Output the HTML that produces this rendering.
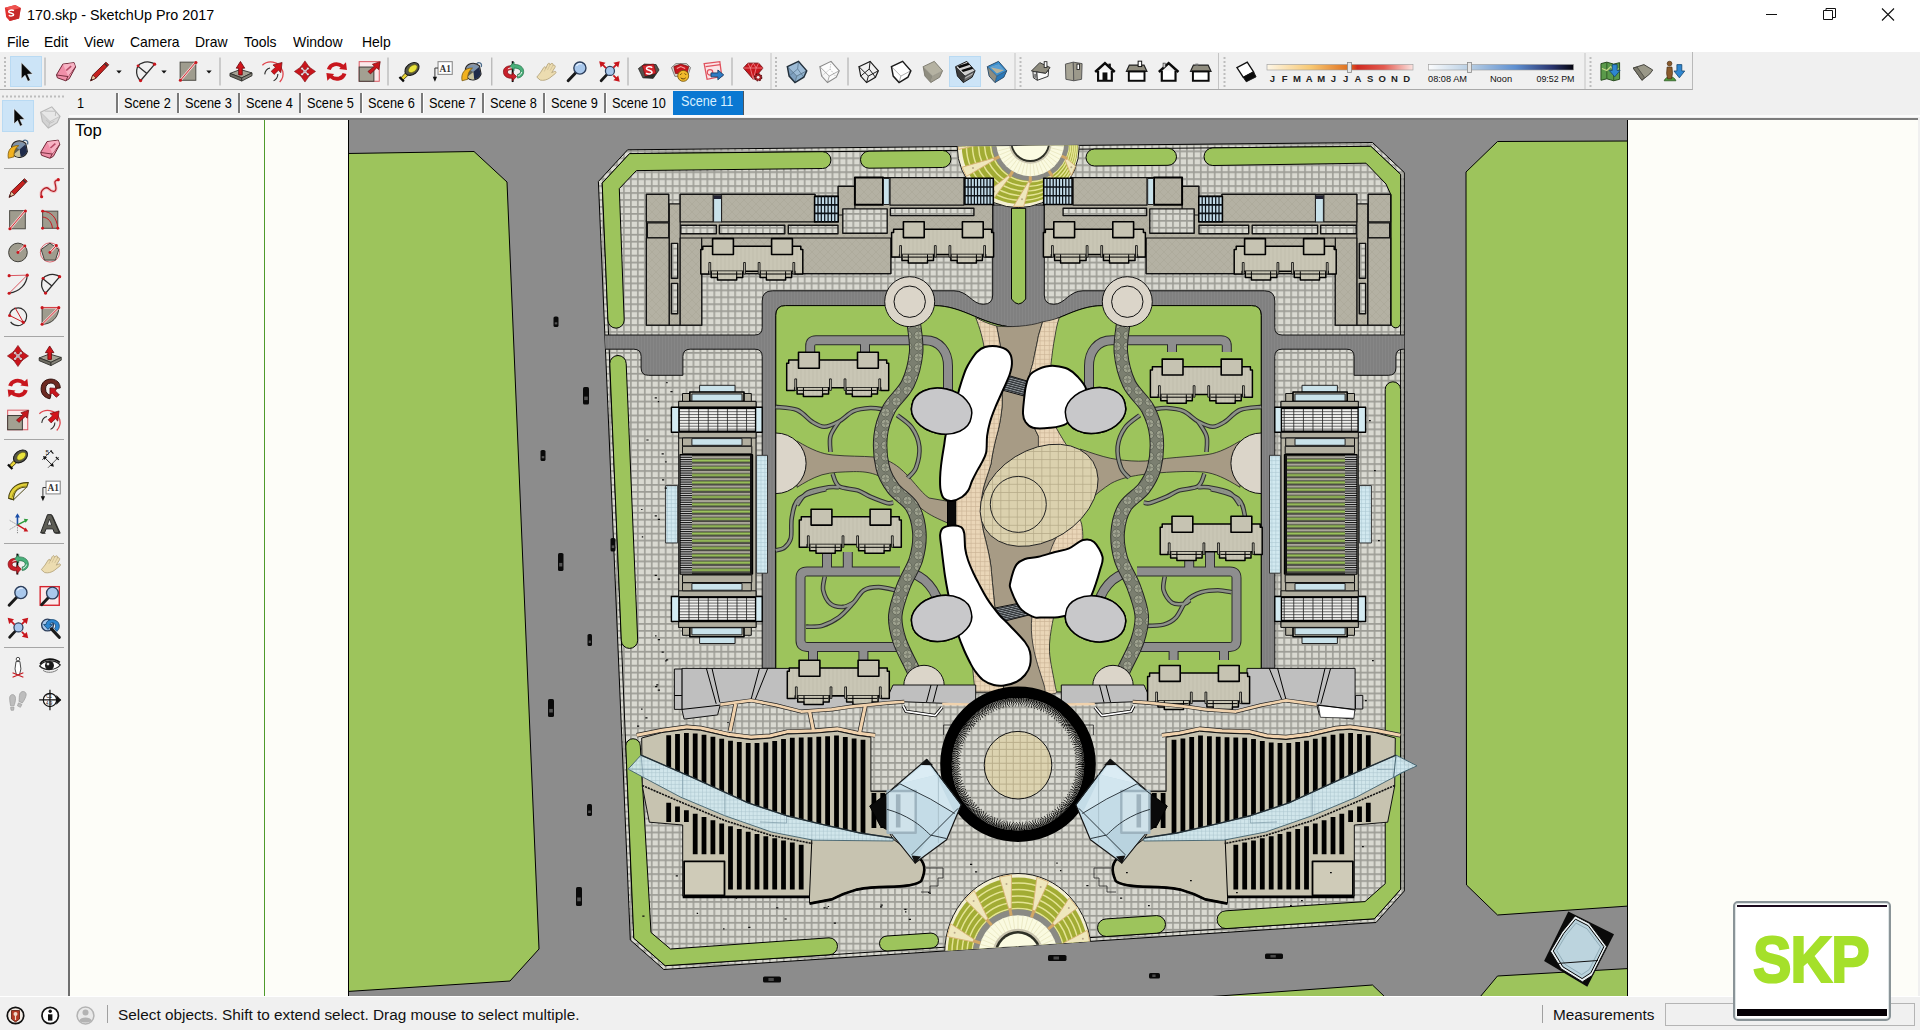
<!DOCTYPE html>
<html lang="en">
<head>
<meta charset="utf-8">
<title>170.skp - SketchUp Pro 2017</title>
<style>
*{box-sizing:border-box;margin:0;padding:0}
html,body{width:1920px;height:1030px;overflow:hidden;background:#f0f0f0;font-family:"Liberation Sans",sans-serif;color:#000}
.abs{position:absolute}
#titlebar{position:absolute;left:0;top:0;width:1920px;height:52px;background:#fff}
#title{position:absolute;left:27px;top:6px;font-size:15px;line-height:18px;white-space:nowrap;transform-origin:0 0;transform:scaleX(.955)}
.menu{position:absolute;top:32.7px;font-size:15px;line-height:18px;white-space:nowrap;transform-origin:0 0;transform:scaleX(.93)}
#toolbar{position:absolute;left:0;top:52px;width:1920px;height:38px;background:#f0f0f0}
#tbbox{position:absolute;left:0;top:0;width:1693px;height:38px;border-right:1px solid #b9b9b9;border-bottom:1px solid #a9a9a9}
#wline{position:absolute;left:69px;top:115px;width:1851px;height:2px;background:#fbfbfb}
#tabs{position:absolute;left:69px;top:91px;height:25px;width:1851px}
.tab{position:absolute;top:4px;font-size:14px;line-height:16px;white-space:nowrap;transform-origin:0 0;transform:scaleX(.91)}
.tsep{position:absolute;top:2px;width:2px;height:20px;background:#7a7a7a;border-right:1px solid #fff;box-sizing:content-box}
#seltab{position:absolute;left:604px;top:0;width:71px;height:24px;background:#0a78d2;border-right:1px solid #4a5560}
#seltab span{position:absolute;left:8px;top:2px;color:#d8f0ff;font-size:14px;line-height:16px;white-space:nowrap;transform-origin:0 0;transform:scaleX(.9)}
#lefttb{position:absolute;left:0;top:91px;width:68px;height:906px;background:#f0f0f0}
#viewport{position:absolute;left:68px;top:118px;width:1850px;height:878px;background:#fdfdf8;border-left:2px solid #6e6e6e;border-top:2px solid #7c7c7c;overflow:hidden}
#vtop{position:absolute;left:5px;top:1px;font-family:"Liberation Sans",sans-serif;font-size:17px;line-height:19px;transform-origin:0 0;transform:scaleX(.98)}
#axis{position:absolute;left:194px;top:0;width:1px;height:876px;background:#4f9a2c}
#plan{position:absolute;left:278px;top:0;width:1280px;height:876px}
#status{position:absolute;left:0;top:996px;width:1920px;height:34px;background:#f0f0f0;border-top:1px solid #fff}
#stext{position:absolute;left:118px;top:9px;font-size:15.5px;line-height:18px;white-space:nowrap;transform-origin:0 0;transform:scaleX(.99);color:#111}
#meas{position:absolute;left:1553px;top:9px;font-size:15.5px;line-height:18px;white-space:nowrap;transform-origin:0 0;transform:scaleX(.99);color:#111}
#measbox{position:absolute;left:1665px;top:6px;width:250px;height:23px;border:1px solid #b4b4b4;background:#f0f0f0}
#skp{position:absolute;left:1733px;top:901px;width:158px;height:120px;border-radius:5px;background:#fff;border:2px solid #8a9498;box-shadow:0 0 0 1px #dfe5e6 inset}
#skp .t{position:absolute;left:2px;top:2px;right:2px;height:2px;background:#1b0a1d}
#skp .b{position:absolute;left:2px;bottom:3px;right:2px;height:7px;background:#050005}
#skp span{position:absolute;left:18px;top:22px;font-weight:bold;font-size:64px;line-height:70px;color:#a5e02a;letter-spacing:-1px;transform-origin:0 0;transform:scaleX(.9);-webkit-text-stroke:2.2px #a5e02a}
</style>
</head>
<body>
<div id="titlebar">
<div id="title">170.skp - SketchUp Pro 2017</div>
<div class="menu" style="left:7px">File</div>
<div class="menu" style="left:44px">Edit</div>
<div class="menu" style="left:84px">View</div>
<div class="menu" style="left:130px">Camera</div>
<div class="menu" style="left:195px">Draw</div>
<div class="menu" style="left:244px">Tools</div>
<div class="menu" style="left:293px">Window</div>
<div class="menu" style="left:362px">Help</div>
<svg class="abs" style="left:0;top:0" width="1920" height="30" viewBox="0 0 1920 30"><g transform="translate(4 4.2) scale(.86)"><path d="M1 4L13 1L19.5 4.5L17.5 16.5L6.5 19.5L2.5 15Z" fill="#e0312f"/><path d="M1 4L13 1L19.5 4.5L8 7.5Z" fill="#ef5350"/><path d="M8 7.5L19.5 4.5L17.5 16.5L6.5 19.5Z" fill="#c62828"/><path d="M11.5 7.6C9.5 6.2 5.3 6.8 5.4 8.8C5.5 10.6 11 10 11.2 12C11.4 13.8 7.4 14.2 5.6 12.8" fill="none" stroke="#fff" stroke-width="1.7"/></g><path d="M1766 14.5H1777" stroke="#111" stroke-width="1"/><path d="M1823.5 10.5H1832.5V19.5H1823.5ZM1826 10.5V8.5H1835.5V17.5H1832.5" fill="none" stroke="#111" stroke-width="1"/><path d="M1882 8.5L1894 20.5M1894 8.5L1882 20.5" stroke="#111" stroke-width="1.1"/></svg>
</div>
<div id="toolbar"><div id="tbbox"></div>
<svg class="abs" style="left:0;top:0;font-family:'Liberation Sans',sans-serif" width="1920" height="38" viewBox="0 0 1920 38"><rect x="4.0" y="5.0" width="2" height="2" fill="#bdbdbd"/><rect x="4.0" y="9.0" width="2" height="2" fill="#bdbdbd"/><rect x="4.0" y="13.0" width="2" height="2" fill="#bdbdbd"/><rect x="4.0" y="17.0" width="2" height="2" fill="#bdbdbd"/><rect x="4.0" y="21.0" width="2" height="2" fill="#bdbdbd"/><rect x="4.0" y="25.0" width="2" height="2" fill="#bdbdbd"/><rect x="4.0" y="29.0" width="2" height="2" fill="#bdbdbd"/><rect x="4.0" y="33.0" width="2" height="2" fill="#bdbdbd"/><rect x="10.5" y="4.5" width="31" height="30" fill="#cce4f7" stroke="#b9daf3" stroke-width="1"/><g transform="translate(12.9 6.9) scale(1.05)"><path d="M8 3.5L8 19L11.6 15.6L14.2 21.4L16.6 20.3L14 14.6L18.8 14.4Z" fill="#0a0a0a" stroke="#fff" stroke-width=".5"/></g><rect x="44.5" y="5.5" width="1" height="28.0" fill="#a6a6a6"/><g transform="translate(54.0 7.7) scale(0.98)"><path d="M2.5 15.5L9 4.5L20.5 3L22 7.5L15.5 19.5L12 21.5L3.5 18.5Z" fill="#f08fa8" stroke="#6b2433" stroke-width="1"/><path d="M2.8 15.6L14.2 17.2L21.8 7.4M14.2 17.2L12.2 21.2" fill="none" stroke="#6b2433" stroke-width=".9"/><path d="M9.2 5L14.6 16.8L21.5 7L20.3 3.3Z" fill="#f7b3c4"/><path d="M12.5 11L17.5 6.5" stroke="#b54a66" stroke-width="1.6"/></g><g transform="translate(87.7 7.7) scale(0.98)"><path d="M3 21.5L5.2 15.6L18.6 2.6L21.4 5.2L8.6 18.8Z" fill="#c7211f" stroke="#5a0d0d" stroke-width=".9"/><path d="M3 21.5L5.2 15.6L8.6 18.8Z" fill="#e8c9a0" stroke="#5a0d0d" stroke-width=".7"/><path d="M3 21.5L3.9 19.2L5.2 20.4Z" fill="#111"/><path d="M17.2 4L20 6.6" stroke="#333" stroke-width="1.4"/></g><g transform="translate(133.2 7.7) scale(0.98)"><path d="M7.5 21.5C1 15 3 5 9 3.5C14 1.2 19.5 2.5 22 4.5L7.5 21.5M4.5 6.5L14 14" fill="none" stroke="#2b2b2b" stroke-width="1.3"/><circle cx="7.5" cy="21.3" r="1.7" fill="#c8161d"/><circle cx="21.8" cy="4.6" r="1.7" fill="#c8161d"/><circle cx="5" cy="6.3" r="1.5" fill="#c8161d"/></g><g transform="translate(176.7 7.7) scale(0.98)"><rect x="3.5" y="2.5" width="16" height="18.5" fill="#9f9c8e" stroke="#4b4a44" stroke-width="1"/><path d="M3.8 21L19.4 2.6" stroke="#f5d5d5" stroke-width="2.6"/><path d="M3.8 21L19.4 2.6" stroke="#c8161d" stroke-width=".9"/><circle cx="3.8" cy="21" r="1.6" fill="#c8161d"/><circle cx="19.6" cy="2.8" r="1.6" fill="#c8161d"/></g><g transform="translate(229.0 7.7) scale(0.98)"><path d="M1 14L11.5 10L23.5 13.5L13 18.5Z" fill="#a6a395" stroke="#2d2d2a" stroke-width=".9"/><path d="M1 14L13 18.5L13 21.8L1 16.8Z" fill="#6e6c62" stroke="#2d2d2a" stroke-width=".9"/><path d="M13 18.5L23.5 13.5L23.5 16.3L13 21.8Z" fill="#85837a" stroke="#2d2d2a" stroke-width=".9"/><path d="M9.9 15.5V8.6H7.4L11.7 1.8L16 8.6H13.5V15.5Z" fill="#d3141b" stroke="#6d0b10" stroke-width=".9"/></g><g transform="translate(261.2 7.7) scale(0.98)"><path d="M1.2 5.6C6 0.8 18 -0.2 22 11.8C23 16 21.5 20 18.9 22.8" fill="none" stroke="#e0444c" stroke-width="1.3"/><path d="M3.6 15C4 11.5 6 9 9 8.4M12.6 21.6C15.4 20 17 17.5 17 14.5" fill="none" stroke="#2a2a2a" stroke-width="1.1"/><path d="M21.3 2.8L12 5.4L14.6 7.8L10.2 11.8L13.2 15L17.6 10.8L20 13.2Z" fill="#d3141b" stroke="#6d0b10" stroke-width=".7"/></g><g transform="translate(293.2 7.7) scale(0.98)"><g fill="#c9151c" stroke="#7d0d12" stroke-width=".6"><path d="M12 1.2L16.6 7.8H13.7V10.3H10.3V7.8H7.4Z"/><path d="M12 22.8L16.6 16.2H13.7V13.7H10.3V16.2H7.4Z"/><path d="M1.2 12L7.8 7.4V10.3H10.3V13.7H7.8V16.6Z"/><path d="M22.8 12L16.2 7.4V10.3H13.7V13.7H16.2V16.6Z"/></g><path d="M8.6 8.6L15.4 15.4M15.4 8.6L8.6 15.4" stroke="#f3f3f3" stroke-width="1.3"/><path d="M9.2 9.2L14.8 14.8M14.8 9.2L9.2 14.8" stroke="#8a5a7a" stroke-width=".5"/></g><g transform="translate(324.9 7.7) scale(0.98)"><g fill="none" stroke="#c8161d" stroke-width="4"><path d="M4 10C5.5 4.5 13 2.5 18 7"/><path d="M20 14C18.5 19.5 11 21.5 6 17"/></g><path d="M14.5 9.5L22.5 10.5L21.5 2.5Z" fill="#c8161d"/><path d="M9.5 14.5L1.5 13.5L2.5 21.5Z" fill="#c8161d"/></g><g transform="translate(357.7 7.7) scale(0.98)"><rect x="1.5" y="2" width="20.5" height="20" fill="#fbe9ea" stroke="#d9545e" stroke-width="1"/><rect x="1.5" y="7.5" width="15" height="14.5" fill="#a3a092" stroke="#3a3934" stroke-width="1"/><path d="M10.5 12L17 6.8L15 4.6L23 2L21.5 10.2L19.4 8.4L13 14.5Z" fill="#c8161d" stroke="#6d0b10" stroke-width=".7"/></g><g transform="translate(397.7 7.7) scale(0.98)"><path d="M8.2 13.2L3 18.8L5.2 21L10.8 15.6Z" fill="#e8d437" stroke="#3a3608" stroke-width=".9"/><path d="M1.8 17.6L6.3 22.3" stroke="#0a0a0a" stroke-width="2.4"/><ellipse cx="14.6" cy="9.4" rx="8" ry="5.6" transform="rotate(-38 14.6 9.4)" fill="#55564a" stroke="#1a1a1a" stroke-width="1.1"/><ellipse cx="15.4" cy="9.2" rx="5.2" ry="3.2" transform="rotate(-38 15.4 9.2)" fill="#e9e33c" stroke="#6b6414" stroke-width=".7"/></g><g transform="translate(430.2 7.7) scale(0.98)"><rect x="8" y="2" width="14.5" height="13" fill="#fff" stroke="#8a8a8a" stroke-width="1.1"/><text x="15.3" y="12.2" font-family="Liberation Serif,serif" font-weight="bold" font-size="9.5" text-anchor="middle" fill="#333">A1</text><path d="M8 8.5H4.8V19" fill="none" stroke="#333" stroke-width="1"/><path d="M2.6 17.5H7L4.8 22.5Z" fill="#111"/></g><g transform="translate(459.9 7.7) scale(0.98)"><path d="M17 4.2C19.5 1.6 23 3.6 21.8 7.4" fill="none" stroke="#4a6a8a" stroke-width="1.2"/><path d="M5.5 9.5C7 3.5 15 1.6 20 6.4L21.6 14.6C19.4 21 11.4 22.6 7.4 18Z" fill="#8f9298" stroke="#232323" stroke-width="1.1"/><path d="M6.6 8.8C9.5 4.6 16 4.2 19.6 7.4L13.6 12.6Z" fill="#7c93ad"/><path d="M13.6 12.6L19.6 7.4L21.2 14.6C20 17.6 17.6 19.4 14.6 20Z" fill="#1f2b4a"/><path d="M13.6 12.6L14.6 20C11.6 20.6 9 19.4 7.6 17.4Z" fill="#c9c39c"/><path d="M13.6 12.6L7.6 17.4C6.4 15 6 12 6.6 8.8Z" fill="#5f6156"/><path d="M2.2 21.5C0.8 14 4.8 8 12.8 8.6C9.2 11 7.6 15 8 20Z" fill="#f2b21f" stroke="#7a5a10" stroke-width=".8"/></g><g transform="translate(501.5 7.7) scale(0.98)"><path d="M11.4 1.5V22.8" stroke="#0a0a0a" stroke-width="1.9"/><path d="M10.4 6.2C4.5 6 1.6 9 2 13C2.4 17.2 6.5 19.2 11 19V21.8L15.4 17.2L11 13V15.4C8 15.4 6.2 14.4 6 12.6C5.9 10.9 8 10 10.4 10Z" fill="#c8202a" stroke="#7d0d12" stroke-width=".7"/><path d="M12.8 4.8C19 4.6 22.6 8 22.6 12C22.6 16 20 18.2 16.4 18.8V15C18.6 14.6 19.4 13.4 19.4 12C19.4 10 17 8.6 12.8 8.6V11L8.6 6.8L12.8 2.4Z" fill="#49b07a" stroke="#1d6a40" stroke-width=".7"/><path d="M6.5 9.5C8 8.5 9.5 8.3 10.4 8.3M17 16.5C18.8 15.8 20.4 14.2 20.6 12.6" stroke="#f4f4f4" stroke-width="1" fill="none"/></g><g transform="translate(533.7 7.7) scale(0.98)"><path d="M3.2 17.8C6 15 8 11.5 10.2 8C11.2 6.6 12.8 7.4 12.2 9L14.4 4.4C15.2 2.8 17.2 3.6 16.6 5.4L17.6 4.2C18.8 3 20.4 4.2 19.6 5.8L20.4 5.6C21.8 5.4 22.4 6.8 21.6 8L18.4 13.2L21.2 12C22.6 11.4 23.4 13 22.2 14L16.4 18.6C13.6 20.6 10 21.6 6.6 20.8Z" fill="#ecdcb0" stroke="#b6a57c" stroke-width=".9"/><path d="M12.2 9L10.8 12M16.6 5.4L14 10.6M19.6 5.8L16.8 11" stroke="#c9b98f" stroke-width=".7" fill="none"/></g><g transform="translate(565.2 7.7) scale(0.98)"><path d="M3 21.5L11.5 12.5" stroke="#1a1a1a" stroke-width="3" stroke-linecap="round"/><circle cx="15" cy="8.5" r="6.2" fill="#a9c8ec" stroke="#2d3f5c" stroke-width="1.4"/><path d="M11.5 6.5C12.5 4.5 15 3.5 17 4.3" stroke="#e4f0ff" stroke-width="1.3" fill="none"/></g><g transform="translate(597.7 7.7) scale(0.98)"><path d="M3.5 21.5L10 14.5" stroke="#1a1a1a" stroke-width="2.8" stroke-linecap="round"/><circle cx="12.5" cy="11.5" r="4.6" fill="#a9c8ec" stroke="#2d3f5c" stroke-width="1.3"/><g fill="#c8161d"><path d="M1.5 1.5L8 3L3 8Z"/><path d="M22.5 1.5L21 8L16 3Z"/><path d="M22.5 22.5L16 21L21 16Z"/></g><path d="M4 4L8.5 8.5M20 4L16 8M20 20L16 16" stroke="#c8161d" stroke-width="1.8"/></g><g transform="translate(636.5 7.7) scale(0.98)"><path d="M2 9L8 4.5L20 5L23 10.5L17 19L6.5 18.5Z" fill="#55534d" stroke="#222" stroke-width=".8"/><path d="M6 6L17.5 4.5L20 14L9 17Z" fill="#d6262d" stroke="#7d0d12" stroke-width=".8"/><path d="M16 8.3C14.5 6.6 10.3 7 10.2 9C10.1 11 15.6 10.6 15.8 12.7C16 14.8 11.6 15.3 9.8 13.6" fill="none" stroke="#fff" stroke-width="1.6"/><path d="M6.5 18.5L9 17L20 14L17 19Z" fill="#2b2a27"/></g><g transform="translate(669.0 7.7) scale(0.98)"><path d="M2.5 8L7 4H18L22 8L19 17H6Z" fill="#d8d4cc" stroke="#666" stroke-width=".8"/><path d="M5 7L12 4.5L20 7L18.5 14L6.5 14Z" fill="#c8161d" stroke="#7d0d12" stroke-width=".8"/><path d="M8 9L12 7L16.5 9" stroke="#f2a0a0" stroke-width="1.2" fill="none"/><circle cx="14.5" cy="16.5" r="5.6" fill="#f1b92a" stroke="#7a5a10" stroke-width=".9"/><path d="M11.5 15.5L13 14M16 14L17.5 15.5M12 18.5C13.5 20 15.5 20 17 18.5" stroke="#5a3d08" stroke-width="1" fill="none"/></g><g transform="translate(701.2 7.7) scale(0.98)"><path d="M3 4L19 2L21 17L6 20Z" fill="#fbe4e6" stroke="#e0525e" stroke-width="1.3"/><path d="M4.5 7L19.5 5" stroke="#e0525e" stroke-width="1.4"/><circle cx="9" cy="13" r="2.8" fill="none" stroke="#e0525e" stroke-width="1.2"/><path d="M10 13.5H17V10.5L23 15.5L17 20.5V17.5H10Z" fill="#2e7cc4" stroke="#173e66" stroke-width=".9"/></g><g transform="translate(741.5 7.7) scale(0.98)"><path d="M2 8.5L6.5 3.5H17.5L22 8.5L12 20Z" fill="#c8161d" stroke="#6d0b10" stroke-width=".9"/><path d="M2 8.5H22M6.5 3.5L9 8.5L12 20L15 8.5L17.5 3.5M9 8.5L12 3.5L15 8.5" fill="none" stroke="#f28a8f" stroke-width=".8"/><circle cx="17" cy="18" r="3.6" fill="#a8242a" stroke="#5a0d10" stroke-width="1.4" stroke-dasharray="1.6 1.2"/><circle cx="17" cy="18" r="1.4" fill="#f0f0f0"/></g><g transform="translate(784.9 7.7) scale(0.98)"><path d="M2.5 7.1L13.9 1.7L22.3 11.3L12.1 16.7Z" fill="#9dbbd6"/><path d="M2.5 7.1L12.1 16.7L10.3 23.3L4.3 16.7Z" fill="#7fa0bf"/><path d="M12.1 16.7L22.3 11.3L19.3 17.9L10.3 23.3Z" fill="#8eb0cc"/><path d="M13.9 1.7L13 9.5L4.3 16.7M13 9.5L19.3 17.9" fill="none" stroke="#5c7a94" stroke-width=".8"/><path d="M2.5 7.1L12.1 16.7L22.3 11.3M12.1 16.7L10.3 23.3" fill="none" stroke="#4e6a82" stroke-width="0.8"/><path d="M2.5 7.1L13.9 1.7L22.3 11.3L19.3 17.9L10.3 23.3L4.3 16.7Z" fill="none" stroke="#23303c" stroke-width="1.5"/></g><g transform="translate(817.4 7.7) scale(0.98)"><path d="M2.5 7.1L13.9 1.7L22.3 11.3L12.1 16.7Z" fill="#fdfdfd"/><path d="M2.5 7.1L12.1 16.7L10.3 23.3L4.3 16.7Z" fill="#f6f6f6"/><path d="M12.1 16.7L22.3 11.3L19.3 17.9L10.3 23.3Z" fill="#fafafa"/><path d="M13.9 1.7L13 9.5L4.3 16.7M13 9.5L19.3 17.9" fill="none" stroke="#b5b5b5" stroke-width=".8" stroke-dasharray="1.5 1"/><path d="M2.5 7.1L12.1 16.7L22.3 11.3M12.1 16.7L10.3 23.3" fill="none" stroke="#8a8a8a" stroke-width="0.7"/><path d="M2.5 7.1L13.9 1.7L22.3 11.3L19.3 17.9L10.3 23.3L4.3 16.7Z" fill="none" stroke="#8a8a8a" stroke-width="1.1"/></g><g transform="translate(856.5 7.7) scale(0.98)"><path d="M2.5 7.1L13.9 1.7L22.3 11.3L12.1 16.7Z" fill="none"/><path d="M2.5 7.1L12.1 16.7L10.3 23.3L4.3 16.7Z" fill="none"/><path d="M12.1 16.7L22.3 11.3L19.3 17.9L10.3 23.3Z" fill="none"/><path d="M13.9 1.7L13 9.5L4.3 16.7M13 9.5L19.3 17.9" fill="none" stroke="#1a1a1a" stroke-width="1"/><path d="M2.5 7.1L12.1 16.7L22.3 11.3M12.1 16.7L10.3 23.3" fill="none" stroke="#1a1a1a" stroke-width="1"/><path d="M2.5 7.1L13.9 1.7L22.3 11.3L19.3 17.9L10.3 23.3L4.3 16.7Z" fill="none" stroke="#1a1a1a" stroke-width="1.2"/></g><g transform="translate(889.0 7.7) scale(0.98)"><path d="M2.5 7.1L13.9 1.7L22.3 11.3L12.1 16.7Z" fill="#fff"/><path d="M2.5 7.1L12.1 16.7L10.3 23.3L4.3 16.7Z" fill="#fff"/><path d="M12.1 16.7L22.3 11.3L19.3 17.9L10.3 23.3Z" fill="#fff"/><path d="M2.5 7.1L12.1 16.7L22.3 11.3M12.1 16.7L10.3 23.3" fill="none" stroke="#9a9a9a" stroke-width="0.8"/><path d="M2.5 7.1L13.9 1.7L22.3 11.3L19.3 17.9L10.3 23.3L4.3 16.7Z" fill="none" stroke="#1a1a1a" stroke-width="1.5"/></g><g transform="translate(920.7 7.7) scale(0.98)"><path d="M2.5 7.1L13.9 1.7L22.3 11.3L12.1 16.7Z" fill="#b5b2a2"/><path d="M2.5 7.1L12.1 16.7L10.3 23.3L4.3 16.7Z" fill="#8f8d80"/><path d="M12.1 16.7L22.3 11.3L19.3 17.9L10.3 23.3Z" fill="#a19e90"/><path d="M2.5 7.1L12.1 16.7L22.3 11.3M12.1 16.7L10.3 23.3" fill="none" stroke="#8a887c" stroke-width="0.5"/><path d="M2.5 7.1L13.9 1.7L22.3 11.3L19.3 17.9L10.3 23.3L4.3 16.7Z" fill="none" stroke="#77756a" stroke-width="0.9"/></g><path d="M116.3 18.6h5.4l-2.7 3z" fill="#111"/><path d="M161.3 18.6h5.4l-2.7 3z" fill="#111"/><path d="M206.3 18.6h5.4l-2.7 3z" fill="#111"/><rect x="219.5" y="5.5" width="1" height="28.0" fill="#a6a6a6"/><rect x="387.5" y="5.5" width="1" height="28.0" fill="#a6a6a6"/><rect x="491.3" y="5.5" width="1" height="28.0" fill="#a6a6a6"/><rect x="627.5" y="5.5" width="1" height="28.0" fill="#a6a6a6"/><rect x="731.5" y="5.5" width="1" height="28.0" fill="#a6a6a6"/><rect x="847.5" y="5.5" width="1" height="28.0" fill="#a6a6a6"/><rect x="770.5" y="1.0" width="1" height="36.0" fill="#c4c4c4"/><rect x="775.0" y="5.0" width="2" height="2" fill="#bdbdbd"/><rect x="775.0" y="9.0" width="2" height="2" fill="#bdbdbd"/><rect x="775.0" y="13.0" width="2" height="2" fill="#bdbdbd"/><rect x="775.0" y="17.0" width="2" height="2" fill="#bdbdbd"/><rect x="775.0" y="21.0" width="2" height="2" fill="#bdbdbd"/><rect x="775.0" y="25.0" width="2" height="2" fill="#bdbdbd"/><rect x="775.0" y="29.0" width="2" height="2" fill="#bdbdbd"/><rect x="775.0" y="33.0" width="2" height="2" fill="#bdbdbd"/><rect x="949.5" y="4.5" width="31" height="30" fill="#cce4f7" stroke="#b9daf3" stroke-width="1"/><g transform="translate(953.2 7.7) scale(0.98)"><path d="M2.5 7.1L13.9 1.7L22.3 11.3L12.1 16.7Z" fill="#cfcfcf"/><path d="M2.5 7.1L12.1 16.7L10.3 23.3L4.3 16.7Z" fill="#3a3a3a"/><path d="M12.1 16.7L22.3 11.3L19.3 17.9L10.3 23.3Z" fill="#6a6a6a"/><path d="M4.6 6.4L15.2 3.2L17 5.2L6.4 8.8ZM8.2 10.6L18.8 7.2L20.6 9.3L10 12.6Z" fill="#0a0a0a"/><path d="M11 18.6L20.4 13.6L19.8 15L10.8 20Z" fill="#bdbdbd"/><path d="M2.5 7.1L12.1 16.7L22.3 11.3M12.1 16.7L10.3 23.3" fill="none" stroke="#1a1a1a" stroke-width="0.7"/><path d="M2.5 7.1L13.9 1.7L22.3 11.3L19.3 17.9L10.3 23.3L4.3 16.7Z" fill="none" stroke="#1a1a1a" stroke-width="1"/></g><g transform="translate(984.9 7.7) scale(0.98)"><path d="M2.5 7.1L13.9 1.7L22.3 11.3L12.1 16.7Z" fill="#3a8fd0"/><path d="M2.5 7.1L12.1 16.7L10.3 23.3L4.3 16.7Z" fill="#8f8d80"/><path d="M12.1 16.7L22.3 11.3L19.3 17.9L10.3 23.3Z" fill="#2a78b8"/><path d="M5.5 7.6L14 5L19.5 10.8L12.2 14.2Z" fill="#b9b39a"/><path d="M5.5 7.6L19.5 10.8L14 5Z" fill="#5aa0d6"/><path d="M2.5 7.1L12.1 16.7L22.3 11.3M12.1 16.7L10.3 23.3" fill="none" stroke="#2b4d6a" stroke-width="0.7"/><path d="M2.5 7.1L13.9 1.7L22.3 11.3L19.3 17.9L10.3 23.3L4.3 16.7Z" fill="none" stroke="#2b4d6a" stroke-width="1"/></g><rect x="1014.5" y="1.0" width="1" height="36.0" fill="#c4c4c4"/><rect x="1019.5" y="5.0" width="2" height="2" fill="#bdbdbd"/><rect x="1019.5" y="9.0" width="2" height="2" fill="#bdbdbd"/><rect x="1019.5" y="13.0" width="2" height="2" fill="#bdbdbd"/><rect x="1019.5" y="17.0" width="2" height="2" fill="#bdbdbd"/><rect x="1019.5" y="21.0" width="2" height="2" fill="#bdbdbd"/><rect x="1019.5" y="25.0" width="2" height="2" fill="#bdbdbd"/><rect x="1019.5" y="29.0" width="2" height="2" fill="#bdbdbd"/><rect x="1019.5" y="33.0" width="2" height="2" fill="#bdbdbd"/><g transform="translate(1029.0 7.7) scale(0.98)"><path d="M2.5 11.5L11 3L21.5 8L17 14L8 12.5Z" fill="#8f8c7e" stroke="#333" stroke-width="1"/><path d="M4 12L8 12.5L8.5 21L4.5 18.5Z" fill="#e8e8e8" stroke="#333" stroke-width="1"/><path d="M8 12.5L17 14L20 10.5L19.5 17L8.5 21Z" fill="#fafafa" stroke="#333" stroke-width="1"/><rect x="15.5" y="2" width="2.8" height="6" fill="#fff" stroke="#222" stroke-width=".9"/><rect x="5.3" y="14.5" width="1.8" height="4" fill="#777"/></g><g transform="translate(1061.5 7.7) scale(0.98)"><path d="M4 4.5L12 2.5L12.5 21.5L4.5 20Z" fill="#a8a596" stroke="#555" stroke-width="1"/><path d="M12 2.5L21 4L20.5 20L12.5 21.5Z" fill="#9c998b" stroke="#555" stroke-width="1"/><rect x="15.8" y="4.5" width="2.6" height="5.5" fill="#fff" stroke="#222" stroke-width=".9"/></g><g transform="translate(1093.2 7.7) scale(0.98)"><path d="M2 12.5L12 3.5L22 12.5" fill="none" stroke="#0a0a0a" stroke-width="2.6"/><path d="M5 11V21.5H19V11" fill="#fff" stroke="#0a0a0a" stroke-width="2.2"/><rect x="9.5" y="13" width="5" height="8.5" fill="#111"/><rect x="15.5" y="4" width="2.5" height="4" fill="#111"/></g><g transform="translate(1124.9 7.7) scale(0.98)"><path d="M1.5 12L4.5 5.5H19.5L22.5 12Z" fill="#8f8c7e" stroke="#222" stroke-width="1.2"/><rect x="4" y="12" width="16" height="9.5" fill="#fff" stroke="#0a0a0a" stroke-width="2"/><rect x="13.5" y="1.5" width="3.6" height="5.5" fill="#fff" stroke="#111" stroke-width="1"/></g><g transform="translate(1156.9 7.7) scale(0.98)"><path d="M2 12.5L12 3.5L22 12.5" fill="none" stroke="#0a0a0a" stroke-width="2.6"/><path d="M5 11V21.5H19V11" fill="#fff" stroke="#0a0a0a" stroke-width="2.2"/><rect x="6.3" y="3.5" width="2.2" height="4.5" fill="#ddd" stroke="#333" stroke-width=".7"/></g><g transform="translate(1189.0 7.7) scale(0.98)"><path d="M1.5 12L4.5 5.5H19.5L22.5 12Z" fill="#8f8c7e" stroke="#222" stroke-width="1.2"/><rect x="4" y="12" width="16" height="9.5" fill="#fff" stroke="#0a0a0a" stroke-width="2"/><rect x="6.5" y="4" width="3" height="2" fill="#777"/></g><rect x="1218.0" y="1.0" width="1" height="36.0" fill="#c4c4c4"/><rect x="1223.5" y="5.0" width="2" height="2" fill="#bdbdbd"/><rect x="1223.5" y="9.0" width="2" height="2" fill="#bdbdbd"/><rect x="1223.5" y="13.0" width="2" height="2" fill="#bdbdbd"/><rect x="1223.5" y="17.0" width="2" height="2" fill="#bdbdbd"/><rect x="1223.5" y="21.0" width="2" height="2" fill="#bdbdbd"/><rect x="1223.5" y="25.0" width="2" height="2" fill="#bdbdbd"/><rect x="1223.5" y="29.0" width="2" height="2" fill="#bdbdbd"/><rect x="1223.5" y="33.0" width="2" height="2" fill="#bdbdbd"/><g transform="translate(1234.0 7.7) scale(0.98)"><path d="M3 8L13.5 2.5L20 12.5L9.5 18Z" fill="#fff" stroke="#111" stroke-width="1.4"/><path d="M9.5 18L20 12.5L22.5 17.5L12.5 22.5Z" fill="#0a0a0a" stroke="#111" stroke-width="1"/></g><defs><linearGradient id="mg" x1="0" x2="1"><stop offset="0" stop-color="#fdf6e6"/><stop offset=".3" stop-color="#f7c873"/><stop offset=".56" stop-color="#e0701e"/><stop offset=".62" stop-color="#d02a20"/><stop offset=".8" stop-color="#e35a50"/><stop offset="1" stop-color="#fbe3e0"/></linearGradient><linearGradient id="tg" x1="0" x2="1"><stop offset="0" stop-color="#fbfcfd"/><stop offset=".28" stop-color="#b9cfe4"/><stop offset=".6" stop-color="#5e8fd0"/><stop offset=".85" stop-color="#2a3570"/><stop offset="1" stop-color="#05050f"/></linearGradient></defs><rect x="1267" y="12.5" width="146" height="5.5" fill="url(#mg)" stroke="#9a9a9a" stroke-width=".6"/><rect x="1347.5" y="10.5" width="4" height="10" fill="#e6e6e6" stroke="#8a8a8a" stroke-width=".8"/><rect x="1428.5" y="12.5" width="145" height="5.5" fill="url(#tg)" stroke="#9a9a9a" stroke-width=".6"/><rect x="1467.5" y="10.5" width="4" height="10" fill="#e6e6e6" stroke="#8a8a8a" stroke-width=".8"/><text x="1272.5" y="30" font-size="9.5" font-weight="bold" text-anchor="middle" fill="#222">J</text><text x="1284.7" y="30" font-size="9.5" font-weight="bold" text-anchor="middle" fill="#222">F</text><text x="1296.9" y="30" font-size="9.5" font-weight="bold" text-anchor="middle" fill="#222">M</text><text x="1309.1" y="30" font-size="9.5" font-weight="bold" text-anchor="middle" fill="#222">A</text><text x="1321.3" y="30" font-size="9.5" font-weight="bold" text-anchor="middle" fill="#222">M</text><text x="1333.5" y="30" font-size="9.5" font-weight="bold" text-anchor="middle" fill="#222">J</text><text x="1345.7" y="30" font-size="9.5" font-weight="bold" text-anchor="middle" fill="#222">J</text><text x="1357.9" y="30" font-size="9.5" font-weight="bold" text-anchor="middle" fill="#222">A</text><text x="1370.1" y="30" font-size="9.5" font-weight="bold" text-anchor="middle" fill="#222">S</text><text x="1382.3" y="30" font-size="9.5" font-weight="bold" text-anchor="middle" fill="#222">O</text><text x="1394.5" y="30" font-size="9.5" font-weight="bold" text-anchor="middle" fill="#222">N</text><text x="1406.7" y="30" font-size="9.5" font-weight="bold" text-anchor="middle" fill="#222">D</text><text x="1447.5" y="30" font-size="9.3" text-anchor="middle" fill="#111" textLength="39" lengthAdjust="spacingAndGlyphs">08:08 AM</text><text x="1501" y="30" font-size="9.3" text-anchor="middle" fill="#111">Noon</text><text x="1555.5" y="30" font-size="9.3" text-anchor="middle" fill="#111" textLength="38" lengthAdjust="spacingAndGlyphs">09:52 PM</text><rect x="1584.5" y="1.0" width="1" height="36.0" fill="#c4c4c4"/><rect x="1589.5" y="5.0" width="2" height="2" fill="#bdbdbd"/><rect x="1589.5" y="9.0" width="2" height="2" fill="#bdbdbd"/><rect x="1589.5" y="13.0" width="2" height="2" fill="#bdbdbd"/><rect x="1589.5" y="17.0" width="2" height="2" fill="#bdbdbd"/><rect x="1589.5" y="21.0" width="2" height="2" fill="#bdbdbd"/><rect x="1589.5" y="25.0" width="2" height="2" fill="#bdbdbd"/><rect x="1589.5" y="29.0" width="2" height="2" fill="#bdbdbd"/><rect x="1589.5" y="33.0" width="2" height="2" fill="#bdbdbd"/><g transform="translate(1599.0 7.7) scale(0.98)"><path d="M2 4L8 2.5L15 4.5L21 3V20L15 21.5L8 19.5L2 21Z" fill="#5a9a4a" stroke="#274a1f" stroke-width="1"/><path d="M8 2.5V19.5M15 4.5V21.5" stroke="#274a1f" stroke-width=".8"/><path d="M3 9L8 11L12 7L16 12L20 9" stroke="#c9d98a" stroke-width="1.2" fill="none"/><path d="M13.5 5H18.5V11H21.5L16 17.5L10.5 11H13.5Z" fill="#2e86d0" stroke="#15456e" stroke-width=".8"/></g><g transform="translate(1631.2 7.7) scale(0.98)"><path d="M2 8.5L13 5L22 10.5L19 14.5L11 21Z" fill="#9a9888" stroke="#44433c" stroke-width="1"/><path d="M2 8.5L11 21L13.5 18L6 7.5Z" fill="#7c7a6c" stroke="#44433c" stroke-width=".8"/></g><g transform="translate(1662.2 7.7) scale(0.98)"><path d="M2 21.5C4 16 12 16 14 21.5Z" fill="#4f9a3c" stroke="#2a5a20" stroke-width=".8"/><circle cx="7.5" cy="4" r="2.4" fill="#8a5a2c" stroke="#4a2d10" stroke-width=".7"/><path d="M5 7.5H10L10.5 14L9.5 19.5H5.5L4.5 14Z" fill="#8a5a2c" stroke="#4a2d10" stroke-width=".7"/><path d="M15 5H20V11.5H23L17.5 18.5L12 11.5H15Z" fill="#2e86d0" stroke="#15456e" stroke-width=".8"/></g></svg>
</div>
<div id="lefttb">
<svg class="abs" style="left:0;top:0" width="68" height="640" viewBox="0 0 68 640"><rect x="2.0" y="4.5" width="2" height="2" fill="#bdbdbd"/><rect x="6.0" y="4.5" width="2" height="2" fill="#bdbdbd"/><rect x="10.0" y="4.5" width="2" height="2" fill="#bdbdbd"/><rect x="14.0" y="4.5" width="2" height="2" fill="#bdbdbd"/><rect x="18.0" y="4.5" width="2" height="2" fill="#bdbdbd"/><rect x="22.0" y="4.5" width="2" height="2" fill="#bdbdbd"/><rect x="26.0" y="4.5" width="2" height="2" fill="#bdbdbd"/><rect x="30.0" y="4.5" width="2" height="2" fill="#bdbdbd"/><rect x="34.0" y="4.5" width="2" height="2" fill="#bdbdbd"/><rect x="38.0" y="4.5" width="2" height="2" fill="#bdbdbd"/><rect x="42.0" y="4.5" width="2" height="2" fill="#bdbdbd"/><rect x="46.0" y="4.5" width="2" height="2" fill="#bdbdbd"/><rect x="50.0" y="4.5" width="2" height="2" fill="#bdbdbd"/><rect x="54.0" y="4.5" width="2" height="2" fill="#bdbdbd"/><rect x="58.0" y="4.5" width="2" height="2" fill="#bdbdbd"/><rect x="62.0" y="4.5" width="2" height="2" fill="#bdbdbd"/><rect x="2.5" y="9.5" width="31" height="31" fill="#cce4f7" stroke="#b9daf3" stroke-width="1"/><g transform="translate(6.2 14.2) scale(0.98)"><path d="M8 3.5L8 19L11.6 15.6L14.2 21.4L16.6 20.3L14 14.6L18.8 14.4Z" fill="#0a0a0a" stroke="#fff" stroke-width=".5"/></g><g transform="translate(38.2 14.2) scale(0.98)"><g opacity=".55"><path d="M2.5 7.1L13.9 1.7L22.3 11.3L12.1 16.7Z" fill="#e0e0e0"/><path d="M2.5 7.1L12.1 16.7L10.3 23.3L4.3 16.7Z" fill="#bdbdbd"/><path d="M12.1 16.7L22.3 11.3L19.3 17.9L10.3 23.3Z" fill="#cfcfcf"/><path d="M2.5 7.1L12.1 16.7L22.3 11.3M12.1 16.7L10.3 23.3" fill="none" stroke="#8a8a8a" stroke-width="0.7"/><path d="M2.5 7.1L13.9 1.7L22.3 11.3L19.3 17.9L10.3 23.3L4.3 16.7Z" fill="none" stroke="#8a8a8a" stroke-width="1.1"/><path d="M6.5 6L17.8 6.2L17.5 11M8 15L12 18.5L16.5 16.4" fill="none" stroke="#9a9a9a" stroke-width="1"/></g></g><g transform="translate(6.2 46.2) scale(0.98)"><path d="M17 4.2C19.5 1.6 23 3.6 21.8 7.4" fill="none" stroke="#4a6a8a" stroke-width="1.2"/><path d="M5.5 9.5C7 3.5 15 1.6 20 6.4L21.6 14.6C19.4 21 11.4 22.6 7.4 18Z" fill="#8f9298" stroke="#232323" stroke-width="1.1"/><path d="M6.6 8.8C9.5 4.6 16 4.2 19.6 7.4L13.6 12.6Z" fill="#7c93ad"/><path d="M13.6 12.6L19.6 7.4L21.2 14.6C20 17.6 17.6 19.4 14.6 20Z" fill="#1f2b4a"/><path d="M13.6 12.6L14.6 20C11.6 20.6 9 19.4 7.6 17.4Z" fill="#c9c39c"/><path d="M13.6 12.6L7.6 17.4C6.4 15 6 12 6.6 8.8Z" fill="#5f6156"/><path d="M2.2 21.5C0.8 14 4.8 8 12.8 8.6C9.2 11 7.6 15 8 20Z" fill="#f2b21f" stroke="#7a5a10" stroke-width=".8"/></g><g transform="translate(38.2 46.2) scale(0.98)"><path d="M2.5 15.5L9 4.5L20.5 3L22 7.5L15.5 19.5L12 21.5L3.5 18.5Z" fill="#f08fa8" stroke="#6b2433" stroke-width="1"/><path d="M2.8 15.6L14.2 17.2L21.8 7.4M14.2 17.2L12.2 21.2" fill="none" stroke="#6b2433" stroke-width=".9"/><path d="M9.2 5L14.6 16.8L21.5 7L20.3 3.3Z" fill="#f7b3c4"/><path d="M12.5 11L17.5 6.5" stroke="#b54a66" stroke-width="1.6"/></g><g transform="translate(6.2 85.2) scale(0.98)"><path d="M3 21.5L5.2 15.6L18.6 2.6L21.4 5.2L8.6 18.8Z" fill="#c7211f" stroke="#5a0d0d" stroke-width=".9"/><path d="M3 21.5L5.2 15.6L8.6 18.8Z" fill="#e8c9a0" stroke="#5a0d0d" stroke-width=".7"/><path d="M3 21.5L3.9 19.2L5.2 20.4Z" fill="#111"/><path d="M17.2 4L20 6.6" stroke="#333" stroke-width="1.4"/></g><g transform="translate(38.2 85.2) scale(0.98)"><path d="M3.5 21C1 14 8 10 11 13C14 16.5 19 17 18 11C17.5 7 15 5 20.5 3.5" fill="none" stroke="#f5c5c8" stroke-width="3.4"/><path d="M3.5 21C1 14 8 10 11 13C14 16.5 19 17 18 11C17.5 7 15 5 20.5 3.5" fill="none" stroke="#b01a22" stroke-width="1.3"/><circle cx="3.5" cy="21" r="1.6" fill="#c8161d"/><circle cx="20.5" cy="3.5" r="1.6" fill="#c8161d"/></g><g transform="translate(6.2 117.2) scale(0.98)"><rect x="3.5" y="2.5" width="16" height="18.5" fill="#9f9c8e" stroke="#4b4a44" stroke-width="1"/><path d="M3.8 21L19.4 2.6" stroke="#f5d5d5" stroke-width="2.6"/><path d="M3.8 21L19.4 2.6" stroke="#c8161d" stroke-width=".9"/><circle cx="3.8" cy="21" r="1.6" fill="#c8161d"/><circle cx="19.6" cy="2.8" r="1.6" fill="#c8161d"/></g><g transform="translate(38.2 117.2) scale(0.98)"><rect x="4.5" y="3" width="15.5" height="17.5" fill="#9f9c8e" stroke="#4b4a44" stroke-width="1"/><path d="M4.5 3C13 3.5 19 9 20 20.5M4.5 9C10 9.5 14 14 14.5 20.5" fill="none" stroke="#c8161d" stroke-width="1"/><circle cx="4.5" cy="3" r="1.5" fill="#c8161d"/><circle cx="20" cy="20.5" r="1.5" fill="#c8161d"/><circle cx="4.5" cy="20.5" r="1.5" fill="#c8161d"/></g><g transform="translate(6.2 149.2) scale(0.98)"><circle cx="12" cy="12.5" r="9.5" fill="#9f9c8e" stroke="#3c3b36" stroke-width="1"/><path d="M12 12.5L19 5.8" stroke="#f5d5d5" stroke-width="2.6"/><path d="M12 12.5L19 5.8" stroke="#c8161d" stroke-width=".9"/><circle cx="12" cy="12.5" r="1.5" fill="#c8161d"/><circle cx="19" cy="5.8" r="1.5" fill="#c8161d"/></g><g transform="translate(38.2 149.2) scale(0.98)"><circle cx="12" cy="12.5" r="9.8" fill="none" stroke="#d9545e" stroke-width=".9"/><path d="M12 3L21 9.5L17.6 20.3H6.4L3 9.5Z" fill="#9f9c8e" stroke="#3c3b36" stroke-width="1"/><path d="M12 12.5L18.5 5.5" stroke="#f5d5d5" stroke-width="2.6"/><path d="M12 12.5L18.5 5.5" stroke="#c8161d" stroke-width=".9"/><circle cx="12" cy="12.5" r="1.5" fill="#c8161d"/><circle cx="18.5" cy="5.5" r="1.5" fill="#c8161d"/></g><g transform="translate(6.2 181.2) scale(0.98)"><path d="M3 21.5C14 20 21 12 21.5 3" fill="none" stroke="#2b2b2b" stroke-width="1.2"/><path d="M3 21.5L21.5 3L3 3.5" fill="none" stroke="#d9545e" stroke-width="1"/><circle cx="3" cy="21.5" r="1.6" fill="#c8161d"/><circle cx="21.5" cy="3" r="1.6" fill="#c8161d"/><circle cx="3" cy="3.5" r="1.6" fill="#c8161d"/></g><g transform="translate(38.2 181.2) scale(0.98)"><path d="M7.5 21.5C1 15 3 5 9 3.5C14 1.2 19.5 2.5 22 4.5L7.5 21.5M4.5 6.5L14 14" fill="none" stroke="#2b2b2b" stroke-width="1.3"/><circle cx="7.5" cy="21.3" r="1.7" fill="#c8161d"/><circle cx="21.8" cy="4.6" r="1.7" fill="#c8161d"/><circle cx="5" cy="6.3" r="1.5" fill="#c8161d"/></g><g transform="translate(6.2 213.2) scale(0.98)"><path d="M3.5 11.5C4 4 13 1.5 18 6C23 10.5 21 19 14.5 21.5C10 22.5 6 20.5 4.5 18" fill="none" stroke="#2b2b2b" stroke-width="1.2"/><path d="M3.5 11.5L17.5 18.5L9 3.5" fill="none" stroke="#c8161d" stroke-width="1"/><circle cx="3.5" cy="11.5" r="1.6" fill="#c8161d"/><circle cx="17.5" cy="18.5" r="1.6" fill="#c8161d"/></g><g transform="translate(38.2 213.2) scale(0.98)"><path d="M4 3.5H21C21 13 14 20.5 4 20.5Z" fill="#9f9c8e" stroke="#3c3b36" stroke-width="1"/><path d="M4 3.5H21M4 20.5L21 3.5" stroke="#f5d5d5" stroke-width="2.4"/><path d="M4 3.5H21M4 20.5L21 3.5" stroke="#c8161d" stroke-width=".9"/><circle cx="4" cy="3.5" r="1.6" fill="#c8161d"/><circle cx="21" cy="3.5" r="1.6" fill="#c8161d"/><circle cx="4" cy="20.5" r="1.6" fill="#c8161d"/></g><g transform="translate(6.2 253.2) scale(0.98)"><g fill="#c9151c" stroke="#7d0d12" stroke-width=".6"><path d="M12 1.2L16.6 7.8H13.7V10.3H10.3V7.8H7.4Z"/><path d="M12 22.8L16.6 16.2H13.7V13.7H10.3V16.2H7.4Z"/><path d="M1.2 12L7.8 7.4V10.3H10.3V13.7H7.8V16.6Z"/><path d="M22.8 12L16.2 7.4V10.3H13.7V13.7H16.2V16.6Z"/></g><path d="M8.6 8.6L15.4 15.4M15.4 8.6L8.6 15.4" stroke="#f3f3f3" stroke-width="1.3"/><path d="M9.2 9.2L14.8 14.8M14.8 9.2L9.2 14.8" stroke="#8a5a7a" stroke-width=".5"/></g><g transform="translate(38.2 253.2) scale(0.98)"><path d="M1 14L11.5 10L23.5 13.5L13 18.5Z" fill="#a6a395" stroke="#2d2d2a" stroke-width=".9"/><path d="M1 14L13 18.5L13 21.8L1 16.8Z" fill="#6e6c62" stroke="#2d2d2a" stroke-width=".9"/><path d="M13 18.5L23.5 13.5L23.5 16.3L13 21.8Z" fill="#85837a" stroke="#2d2d2a" stroke-width=".9"/><path d="M9.9 15.5V8.6H7.4L11.7 1.8L16 8.6H13.5V15.5Z" fill="#d3141b" stroke="#6d0b10" stroke-width=".9"/></g><g transform="translate(6.2 285.2) scale(0.98)"><g fill="none" stroke="#c8161d" stroke-width="4"><path d="M4 10C5.5 4.5 13 2.5 18 7"/><path d="M20 14C18.5 19.5 11 21.5 6 17"/></g><path d="M14.5 9.5L22.5 10.5L21.5 2.5Z" fill="#c8161d"/><path d="M9.5 14.5L1.5 13.5L2.5 21.5Z" fill="#c8161d"/></g><g transform="translate(38.2 285.2) scale(0.98)"><path d="M3 13C3 6 8 2.5 14 3C19 3.5 22.5 7 22.5 12L18 12.5C18 9 16 7 13 7C9.5 7 7.5 9.5 7.5 13C7.5 17 10 19 13 19.5L12 23C6.5 22 3 18.5 3 13Z" fill="#6d2a22" stroke="#2d0d0a" stroke-width="1"/><path d="M12 12L19 12.5L17.5 15L21.5 19L18.5 21.5L14.5 17.5L12 19Z" fill="#c8161d" stroke="#6d0b10" stroke-width=".8"/></g><g transform="translate(6.2 317.2) scale(0.98)"><rect x="1.5" y="2" width="20.5" height="20" fill="#fbe9ea" stroke="#d9545e" stroke-width="1"/><rect x="1.5" y="7.5" width="15" height="14.5" fill="#a3a092" stroke="#3a3934" stroke-width="1"/><path d="M10.5 12L17 6.8L15 4.6L23 2L21.5 10.2L19.4 8.4L13 14.5Z" fill="#c8161d" stroke="#6d0b10" stroke-width=".7"/></g><g transform="translate(38.2 317.2) scale(0.98)"><path d="M1.2 5.6C6 0.8 18 -0.2 22 11.8C23 16 21.5 20 18.9 22.8" fill="none" stroke="#e0444c" stroke-width="1.3"/><path d="M3.6 15C4 11.5 6 9 9 8.4M12.6 21.6C15.4 20 17 17.5 17 14.5" fill="none" stroke="#2a2a2a" stroke-width="1.1"/><path d="M21.3 2.8L12 5.4L14.6 7.8L10.2 11.8L13.2 15L17.6 10.8L20 13.2Z" fill="#d3141b" stroke="#6d0b10" stroke-width=".7"/></g><g transform="translate(6.2 356.2) scale(0.98)"><path d="M8.2 13.2L3 18.8L5.2 21L10.8 15.6Z" fill="#e8d437" stroke="#3a3608" stroke-width=".9"/><path d="M1.8 17.6L6.3 22.3" stroke="#0a0a0a" stroke-width="2.4"/><ellipse cx="14.6" cy="9.4" rx="8" ry="5.6" transform="rotate(-38 14.6 9.4)" fill="#55564a" stroke="#1a1a1a" stroke-width="1.1"/><ellipse cx="15.4" cy="9.2" rx="5.2" ry="3.2" transform="rotate(-38 15.4 9.2)" fill="#e9e33c" stroke="#6b6414" stroke-width=".7"/></g><g transform="translate(38.2 356.2) scale(0.98)"><path d="M4 13L14 3M10 21L21 10" stroke="#444" stroke-width=".9"/><path d="M6.5 10.5L14.5 18.5" stroke="#222" stroke-width="1"/><path d="M5 9L9 10L6 13ZM16 20L12 19L15 16Z" fill="#111"/><path d="M12.5 3.5L15.5 6.5M18 10L21 13" stroke="#111" stroke-width="1.2"/><text x="7.5" y="7.5" font-family="Liberation Sans,sans-serif" font-size="6.5" fill="#222">5</text></g><g transform="translate(6.2 388.2) scale(0.98)"><path d="M2.5 19.5C3 9 12 3 22.5 3.5L21 8C12 8 7.5 13 7.5 21Z" fill="#e3d23a" stroke="#4a4410" stroke-width="1.1"/><path d="M6 18.5C7.5 11.5 12.5 7.5 20 7" fill="none" stroke="#8a7d16" stroke-width=".8"/><path d="M2.5 19.5L7.5 21L21 8" fill="none" stroke="#4a4410" stroke-width="1"/></g><g transform="translate(38.2 388.2) scale(0.98)"><rect x="8" y="2" width="14.5" height="13" fill="#fff" stroke="#8a8a8a" stroke-width="1.1"/><text x="15.3" y="12.2" font-family="Liberation Serif,serif" font-weight="bold" font-size="9.5" text-anchor="middle" fill="#333">A1</text><path d="M8 8.5H4.8V19" fill="none" stroke="#333" stroke-width="1"/><path d="M2.6 17.5H7L4.8 22.5Z" fill="#111"/></g><g transform="translate(6.2 421.2) scale(0.98)"><path d="M11.5 13V3" stroke="#1b4fa8" stroke-width="1.6"/><path d="M9 5.5L11.5 1L14 5.5Z" fill="#1b4fa8"/><path d="M11.5 13L20 8.5" stroke="#2c9a3a" stroke-width="1.4"/><path d="M18 6.8L22.5 7.2L19.8 10.8Z" fill="#2c9a3a"/><path d="M11.5 13L20 18" stroke="#c8161d" stroke-width="1.4"/><path d="M19.8 15.6L22.5 19.6L17.8 19.6Z" fill="#c8161d"/><path d="M11.5 13V22M11.5 13L3 8M11.5 13L3 18" stroke="#666" stroke-width=".8" stroke-dasharray="1.2 1.2"/></g><g transform="translate(38.2 421.2) scale(0.98)"><path d="M2.5 21L9.5 2.5H13.5L21.5 21H16.5L15 17H8L6.5 21Z" fill="#5d5d55" stroke="#222" stroke-width="1"/><path d="M9.3 13.2H13.8L11.5 7Z" fill="#f0f0f0" stroke="#222" stroke-width=".8"/><path d="M13.5 2.5L15 3.5L23 21.5L21.5 21Z" fill="#2a2a26"/><path d="M6.5 21L8 22H4L2.5 21ZM16.5 21L18 22H23L21.5 21Z" fill="#2a2a26"/></g><g transform="translate(6.2 461.2) scale(0.98)"><path d="M11.4 1.5V22.8" stroke="#0a0a0a" stroke-width="1.9"/><path d="M10.4 6.2C4.5 6 1.6 9 2 13C2.4 17.2 6.5 19.2 11 19V21.8L15.4 17.2L11 13V15.4C8 15.4 6.2 14.4 6 12.6C5.9 10.9 8 10 10.4 10Z" fill="#c8202a" stroke="#7d0d12" stroke-width=".7"/><path d="M12.8 4.8C19 4.6 22.6 8 22.6 12C22.6 16 20 18.2 16.4 18.8V15C18.6 14.6 19.4 13.4 19.4 12C19.4 10 17 8.6 12.8 8.6V11L8.6 6.8L12.8 2.4Z" fill="#49b07a" stroke="#1d6a40" stroke-width=".7"/><path d="M6.5 9.5C8 8.5 9.5 8.3 10.4 8.3M17 16.5C18.8 15.8 20.4 14.2 20.6 12.6" stroke="#f4f4f4" stroke-width="1" fill="none"/></g><g transform="translate(38.2 461.2) scale(0.98)"><path d="M3.2 17.8C6 15 8 11.5 10.2 8C11.2 6.6 12.8 7.4 12.2 9L14.4 4.4C15.2 2.8 17.2 3.6 16.6 5.4L17.6 4.2C18.8 3 20.4 4.2 19.6 5.8L20.4 5.6C21.8 5.4 22.4 6.8 21.6 8L18.4 13.2L21.2 12C22.6 11.4 23.4 13 22.2 14L16.4 18.6C13.6 20.6 10 21.6 6.6 20.8Z" fill="#ecdcb0" stroke="#b6a57c" stroke-width=".9"/><path d="M12.2 9L10.8 12M16.6 5.4L14 10.6M19.6 5.8L16.8 11" stroke="#c9b98f" stroke-width=".7" fill="none"/></g><g transform="translate(6.2 493.2) scale(0.98)"><path d="M3 21.5L11.5 12.5" stroke="#1a1a1a" stroke-width="3" stroke-linecap="round"/><circle cx="15" cy="8.5" r="6.2" fill="#a9c8ec" stroke="#2d3f5c" stroke-width="1.4"/><path d="M11.5 6.5C12.5 4.5 15 3.5 17 4.3" stroke="#e4f0ff" stroke-width="1.3" fill="none"/></g><g transform="translate(38.2 493.2) scale(0.98)"><rect x="2" y="2.5" width="19.5" height="19" fill="#fbe9ea" stroke="#d6232d" stroke-width="1.4"/><path d="M3.5 21L11 13" stroke="#1a1a1a" stroke-width="3" stroke-linecap="round"/><circle cx="14.5" cy="9" r="6" fill="#a9c8ec" stroke="#2d3f5c" stroke-width="1.4"/></g><g transform="translate(6.2 525.2) scale(0.98)"><path d="M3.5 21.5L10 14.5" stroke="#1a1a1a" stroke-width="2.8" stroke-linecap="round"/><circle cx="12.5" cy="11.5" r="4.6" fill="#a9c8ec" stroke="#2d3f5c" stroke-width="1.3"/><g fill="#c8161d"><path d="M1.5 1.5L8 3L3 8Z"/><path d="M22.5 1.5L21 8L16 3Z"/><path d="M22.5 22.5L16 21L21 16Z"/></g><path d="M4 4L8.5 8.5M20 4L16 8M20 20L16 16" stroke="#c8161d" stroke-width="1.8"/></g><g transform="translate(38.2 525.2) scale(0.98)"><circle cx="9.5" cy="9" r="6" fill="#a9c8ec" stroke="#2d3f5c" stroke-width="1.4"/><path d="M13.5 13L21.5 21.5" stroke="#1a1a1a" stroke-width="3.2" stroke-linecap="round"/><path d="M8 8.5C8 3 17 1.5 20.5 6.5C22.5 10 21.5 13.5 19 15.5L16.5 12.5C18 11.5 18 9.5 17 8C15.5 6 12 6.5 12 8.5H14.5L10 13.5L5.5 8.5Z" fill="#2e86d0" stroke="#15456e" stroke-width=".8"/></g><g transform="translate(6.2 564.2) scale(0.98)"><circle cx="12" cy="4" r="1.8" fill="#fff" stroke="#333" stroke-width=".9"/><path d="M10 6.5H14L15 14L13.6 20H10.4L9 14Z" fill="#fff" stroke="#333" stroke-width=".9"/><path d="M6.5 18L17.5 22.5M17.5 18L6.5 22.5" stroke="#c8161d" stroke-width="1.1"/></g><g transform="translate(38.2 564.2) scale(0.98)"><path d="M1.5 11C6 4.5 17 4 22.5 10C18 15.5 7 16.5 1.5 11Z" fill="#fff" stroke="#222" stroke-width="1.2"/><circle cx="11.5" cy="10.5" r="4.6" fill="#1a1a1a"/><circle cx="10" cy="9" r="1.4" fill="#ddd"/><path d="M2 9C6 3 16 2.5 22 7.5" fill="none" stroke="#111" stroke-width="1.8"/><path d="M5 15.5C9 18.5 16 18 20 14.5" fill="none" stroke="#777" stroke-width="1"/></g><g transform="translate(6.2 597.2) scale(0.98)"><g fill="#bdbdbd" stroke="#9a9a9a" stroke-width=".7"><path d="M3.5 10C3.5 5.5 9.5 5 9.5 10.5C9.5 14 8.5 16 8 18H4.5C4 15.5 3.5 13 3.5 10Z"/><path d="M4.5 19.5H8L7.5 22.5H5Z"/><path d="M14 5.5C16 1.5 22 3.5 20 8.5C19 11.5 17.5 13.5 16.5 15L13 13.5C13.5 11 13 8 14 5.5Z"/><path d="M12.5 15L16 16.5L14.5 19.5L11.5 18Z"/></g></g><g transform="translate(38.2 597.2) scale(0.98)"><circle cx="12" cy="12" r="6.8" fill="#fff" stroke="#111" stroke-width="1.2"/><path d="M1 12H23M12 1.5V22.5" stroke="#111" stroke-width="1.2"/><path d="M18.5 7L23.5 12L18.5 17Z" fill="#111"/><text x="8.2" y="10.5" font-family="Liberation Sans,sans-serif" font-size="4.5" fill="#111">C1</text><text x="8" y="17" font-family="Liberation Sans,sans-serif" font-size="4.5" fill="#111">4.9</text></g><rect x="4" y="77.0" width="60" height="1" fill="#a6a6a6"/><rect x="4" y="245.0" width="60" height="1" fill="#a6a6a6"/><rect x="4" y="348.0" width="60" height="1" fill="#a6a6a6"/><rect x="4" y="452.0" width="60" height="1" fill="#a6a6a6"/><rect x="4" y="556.0" width="60" height="1" fill="#a6a6a6"/></svg>
</div>
<div id="tabs">
<div class="tab" style="left:8px">1</div>
<div class="tsep" style="left:47px"></div><div class="tab" style="left:55px">Scene 2</div>
<div class="tsep" style="left:108px"></div><div class="tab" style="left:116px">Scene 3</div>
<div class="tsep" style="left:169px"></div><div class="tab" style="left:177px">Scene 4</div>
<div class="tsep" style="left:230px"></div><div class="tab" style="left:238px">Scene 5</div>
<div class="tsep" style="left:291px"></div><div class="tab" style="left:299px">Scene 6</div>
<div class="tsep" style="left:352px"></div><div class="tab" style="left:360px">Scene 7</div>
<div class="tsep" style="left:413px"></div><div class="tab" style="left:421px">Scene 8</div>
<div class="tsep" style="left:474px"></div><div class="tab" style="left:482px">Scene 9</div>
<div class="tsep" style="left:535px"></div><div class="tab" style="left:543px">Scene 10</div>
<div id="seltab"><span>Scene 11</span></div>
</div>
<div id="wline"></div>
<div id="viewport">
<div id="vtop">Top</div>
<div id="axis"></div>
<svg id="plan" viewBox="348 120 1280 876" width="1280" height="876"><style>#plan *{stroke-linejoin:round}
.g{fill:#9dc45c;stroke:#000;stroke-width:1}
.rd{fill:#8c8c8c}
.pv{fill:url(#pave);stroke:#000;stroke-width:1}
.ir{fill:url(#iroad);stroke:#111;stroke-width:1}
.gb{fill:url(#gbt);stroke:#111;stroke-width:1.2}
.rb{fill:url(#rbt);stroke:#000;stroke-width:1.5}
.lg{fill:#bfbfbf;stroke:#111;stroke-width:1}
.ln{fill:none;stroke:#000;stroke-width:1}
.gl{fill:#c9e2ea;stroke:#222;stroke-width:1}
.br{fill:#a79b85;stroke:#222;stroke-width:.8}
.pe{fill:url(#peach);stroke:#222;stroke-width:.8}
.pz{fill:#dbd5c9;stroke:#111;stroke-width:1}
.wb{fill:#fff;stroke:#000;stroke-width:2}
.ge{fill:#c8c8ca;stroke:#000;stroke-width:1.5}
.gp{fill:none;stroke:#2a2a2a;stroke-width:10}
.gpi{fill:none;stroke:#8e8e8e;stroke-width:8}
.np{fill:none;stroke:#2f2f2f;stroke-width:4.6}
.npi{fill:none;stroke:#8d9288;stroke-width:2.5}
.pb{fill:none;stroke:#222;stroke-width:14.5}
.pbi{fill:none;stroke:url(#pebble);stroke-width:12.5}
</style><defs><pattern id="pave" patternUnits="userSpaceOnUse" x="4.5" y="4.5" width="6.95" height="6.95"><rect width="7" height="7" fill="#d9d9d1"/><path d="M0 0.9H7M0.9 0V7" stroke="#85857e" stroke-width="1.6" stroke-opacity=".72"/></pattern>
<pattern id="iroad" patternUnits="userSpaceOnUse" width="6" height="6"><rect width="6" height="6" fill="#868686"/><path d="M1 0V6M4 0V6" stroke="#7a7a7a" stroke-width="1"/></pattern>
<pattern id="gbt" patternUnits="userSpaceOnUse" width="8" height="8"><rect width="8" height="8" fill="#b4b1a3"/><path d="M0 0L8 8M8 0L0 8" stroke="#aeab9c" stroke-width="1"/></pattern>
<pattern id="rbt" patternUnits="userSpaceOnUse" width="4" height="4"><rect width="4" height="4" fill="#c9c6b5"/><path d="M1 0V4" stroke="#c2bfad" stroke-width="1"/></pattern>
<pattern id="peach" patternUnits="userSpaceOnUse" width="4.6" height="4.6"><rect width="5" height="5" fill="#ead6b8"/><path d="M0 0.4H5M0.4 0V5" stroke="#c9b394" stroke-width=".7"/></pattern>
<pattern id="oval" patternUnits="userSpaceOnUse" width="8.2" height="8.2"><rect width="9" height="9" fill="#dbd1ae"/><path d="M0 0.4H9M0.4 0V9" stroke="#b5aa88" stroke-width=".8"/></pattern>
<pattern id="pebble" patternUnits="userSpaceOnUse" width="11" height="11"><rect width="11" height="11" fill="#7b7f70"/><circle cx="5.5" cy="5.5" r="4.4" fill="#9da18e" stroke="#5f6356" stroke-width=".9"/><circle cx="5.5" cy="5.5" r="1.7" fill="#7f8373"/><path d="M5.5 2.2V3.6M5.5 7.4V8.8M2.2 5.5H3.6M7.4 5.5H8.8" stroke="#6c7062" stroke-width=".8"/></pattern>
<clipPath id="sc"><polygon points="627.6,149.8 1372.5,142.5 1404.3,172.5 1404.3,891 1376,922.5 663.75,969.5 630.3,940 598.4,181.5"/></clipPath>
<pattern id="solar" patternUnits="userSpaceOnUse" width="3.4" height="12.8" x="0.6" y="1.4"><rect width="4" height="13" fill="#bcd6e4"/><path d="M0.5 0V13" stroke="#1a2430" stroke-width="1.1"/><path d="M0 0.5H4" stroke="#1a2430" stroke-width="1"/></pattern>
<pattern id="wst" patternUnits="userSpaceOnUse" width="9.6" height="2.9" x="678.9" y="408.3"><rect width="10" height="3" fill="#f1f1ee"/><path d="M0 0.5H10" stroke="#555" stroke-width=".9"/><path d="M0.4 0V3" stroke="#222" stroke-width=".9"/></pattern>
<pattern id="roofst" patternUnits="userSpaceOnUse" width="10" height="7.3" y="455.4"><rect width="10" height="7.3" fill="#a9a698"/><rect y="3.6" width="10" height="3" fill="#9dc45c"/><path d="M0 0.3H10M0 3.6H10M0 6.6H10" stroke="#1a1a1a" stroke-width=".8"/></pattern>
<pattern id="dense" patternUnits="userSpaceOnUse" width="4" height="1.8"><rect width="4" height="1.8" fill="#e6e6e6"/><rect width="4" height="1" fill="#111"/></pattern>
<pattern id="glg" patternUnits="userSpaceOnUse" width="3.9" height="3.9"><rect width="4" height="4" fill="#d2e9f0"/><path d="M0 0.4H4M0.4 0V4" stroke="#a9c6d0" stroke-width=".6"/></pattern>
<pattern id="hatch" patternUnits="userSpaceOnUse" width="2.2" height="2.2" patternTransform="rotate(15)"><rect width="3" height="3" fill="#2d3134"/><path d="M0 0.5H3" stroke="#c9d2d6" stroke-width=".6"/></pattern>
<pattern id="oval2" patternUnits="userSpaceOnUse" width="6.95" height="6.95" x="5" y="5.2"><rect width="7" height="7" fill="#dcd3b0"/><path d="M0 0.5H7M0.5 0V7" stroke="#b9ae8b" stroke-width="1"/></pattern>
</defs><rect x="348" y="120" width="1280" height="876" class="rd"/>
<polygon class="g" points="347,153.5 474,151.5 507,182 539,949 510,981 347,991.5"/>
<polygon class="g" points="1497.5,141.5 1629,141 1629,906 1497.5,915 1466.5,885 1466,172"/>
<polygon class="g" points="1480,997 1497.5,976 1629,968.5 1629,997"/>
<polygon class="g" points="1205,997 1372.5,985 1385,997"/>
<polygon class="pv" points="627.6,149.8 1372.5,142.5 1404.3,172.5 1404.3,891 1376,922.5 663.8,969.5 630.3,940 598.4,181.5"/>
<polygon class="ln" points="629.6,153.6 1370.8,146.3 1400.6,174.3 1400.6,889.3 1374.4,918.8 665.2,965.7 633.8,938.2 602.2,183.1"/>
<path class="g" d="M607.9 320L602.2 183.1L629.6 153.6L822.5 151.7A8.4 8.4 0 0 1 822.5 168.5L636.4 170.6L619.3 188.6L624.2 320A8.1 8.1 0 0 1 607.9 320Z"/>
<path class="g" d="M621.3 640.2L609.8 363.7A8.2 8.2 0 0 1 626.2 363.7L637.7 640.2A8.2 8.2 0 0 1 621.3 640.2Z"/>
<path class="g" d="M829 954.8L665.2 965.7L633.8 938.2L625.8 746A7.2 7.2 0 0 1 640.3 746L651 932.5L670.5 949L829 937.8A8.5 8.5 0 0 1 829 954.8Z"/>
<path class="g" d="M887 936L931 933.1A7.5 7.5 0 0 1 931 948.1L887 951A7.5 7.5 0 0 1 887 936Z"/>
<path class="g" d="M1106.3 918.9L1156.7 915.6A8.8 8.8 0 0 1 1156.7 933.2L1106.3 936.5A8.8 8.8 0 0 1 1106.3 918.9Z"/>
<path class="g" d="M1226 910.8L1365 901.6L1385.2 883.7L1385.2 389.5A7.7 7.7 0 0 1 1400.6 389.5L1400.6 889.3L1374.4 918.8L1226 928.6A8.9 8.9 0 0 1 1226 910.8Z"/>
<path class="g" d="M869 151.2L942.5 150.5A8.5 8.5 0 0 1 942.5 167.5L869 168.2A8.5 8.5 0 0 1 869 151.2Z"/>
<path class="g" d="M1094.5 149L1168 148.3A8.5 8.5 0 0 1 1168 165.3L1094.5 166A8.5 8.5 0 0 1 1094.5 149Z"/>
<path class="g" d="M1212.8 147.9L1370.8 146.3L1400.6 174.3L1400.6 323A4.8 4.8 0 0 1 1391 323L1391 195L1386 184L1366 163.2L1212.8 165.5A8.8 8.8 0 0 1 1212.8 147.9Z"/>
<g clip-path="url(#sc)">
<path class="ir" d="M604 335L754.9 335Q762.2 335 762.2 327.7L762.2 301Q762.2 290.8 772.5 290.8L954 290.8C968 290.8 972 304.3 983.3 304.3Q992.7 304.3 992.7 295L992.7 205L1019 205L1019 327.4C1004 327.4 990 323 974.3 316.2C960 310 948 305.6 934 305.6L785.5 305.6Q775.8 305.6 775.8 315.3L775.8 668.3L762.2 668.3L762.2 356.5Q762.2 349.2 755 349.2L690.2 349.2Q682.9 349.2 682.9 356.5L682.9 375.3L648.5 375.3Q641.1 375.3 641.1 368L641.1 356.5Q641.1 349.2 633.8 349.2L604.6 349.2Z"/>
<path class="ir" d="M1433 335L1282.1 335Q1274.8 335 1274.8 327.7L1274.8 301Q1274.8 290.8 1264.5 290.8L1083 290.8C1069 290.8 1065 304.3 1053.7 304.3Q1044.3 304.3 1044.3 295L1044.3 205L1018 205L1018 327.4C1033 327.4 1047 323 1062.7 316.2C1077 310 1089 305.6 1103 305.6L1251.5 305.6Q1261.2 305.6 1261.2 315.3L1261.2 668.3L1274.8 668.3L1274.8 356.5Q1274.8 349.2 1282 349.2L1346.8 349.2Q1354.1 349.2 1354.1 356.5L1354.1 375.3L1388.5 375.3Q1395.9 375.3 1395.9 368L1395.9 356.5Q1395.9 349.2 1403.2 349.2L1432.4 349.2Z"/>
<rect x="1013" y="206" width="11" height="120.5" fill="url(#iroad)"/>
<path class="g" d="M785.5 305.6L934 305.6C948 305.6 960 310 974.3 316.2C990 323 1004 327.4 1019 327.4L1019 692L775.8 692L775.8 315.3Q775.8 305.6 785.5 305.6Z"/>
<path class="g" d="M1251.5 305.6L1103 305.6C1089 305.6 1077 310 1062.7 316.2C1047 323 1033 327.4 1018 327.4L1018 692L1261.2 692L1261.2 315.3Q1261.2 305.6 1251.5 305.6Z"/>
<rect x="1012" y="328.5" width="13" height="362" fill="#9dc45c"/>
<path class="br" d="M797 441C812 450 822 454 833 455C848 456.5 862 456 874 457C884 458 892 462 899 467.5C912 478 920 492 929 498L949 501.5L949 523.5C938 519 930 515 924.5 511C912 502 905 492 895 486C888 479 884 477 878.6 475.8C870 472 862 471.5 853.5 471.6C842 472 832 472 822 474.8C812 478 804 483 797 487.3Z"/>
<path class="br" d="M1240 441C1225 450 1215 454 1204 455C1190 456.5 1180 457 1166.6 458.4C1156 460 1148 461.2 1138.7 461.2C1128 461 1120 460 1110.9 458.4C1100 456 1092 453 1080 449L1090 500C1096 494 1104 488 1110.9 483.5C1120 478.5 1130 476.5 1138.7 475.1C1148 473.5 1158 473 1166.6 472.3C1180 471.5 1190 471 1204 472C1215 473.5 1225 478 1240 487.3Z"/>
<path class="br" d="M996.6 326C998 334 1000.8 344 1001.5 360C1002.5 375 1002.2 391.5 1002.2 405.4C1001 418 999 428 996.6 436.1C994 446 992 456 991 464C988 474 984 484 982.6 491.8C981 500 980.6 508 981.3 516.9C982 526 983.5 532 985.4 539.2C987.5 548 990 558 991 567.1C993 590 998 640 1004 692L1052 692C1050 660 1047 630 1046 600C1046 580 1050 560 1058 540L1080 500L1060 440L1038.4 436.1C1034 428 1031 420 1030 413.8C1027.5 406 1027 398 1027.2 391.5C1028 380 1030 372 1032.8 363.6C1035 352 1037 344 1038.4 335.8L1042.6 321.8C1030 326.5 1008 327.5 996.6 326Z"/>
<path class="pe" d="M975.7 317.6C982 321 990 324.5 996.6 326C998 334 1000.8 344 1001.5 360C1002.5 375 1002.2 391.5 1002.2 405.4C1001 418 999 428 996.6 436.1C994 446 992 456 991 464C988 474 984 484 982.6 491.8C981 500 980.6 508 981.3 516.9C982 526 983.5 532 985.4 539.2C987.5 548 990 558 991 567.1C993 590 998 640 1004 692L975 692L960 540L955.5 523.5L955.5 501.5L965 470L985 400L984 346.9C983 340 980 328 975.7 317.6Z"/>
<path class="pe" d="M1042.6 321.8C1048 321 1054 319.5 1059.3 317.6C1057 324 1056 330 1055.1 335.8C1053 346 1052 356 1051 363.6L1052 420C1056 428 1062 438 1067.7 447L1038.4 447L1038.4 436.1C1034 428 1031 420 1030 413.8C1027.5 406 1027 398 1027.2 391.5C1028 380 1030 372 1032.8 363.6C1035 352 1037 344 1038.4 335.8Z"/>
<path class="pe" d="M1055 540C1058.7 533 1061.8 531.3 1066 528C1070.2 524.7 1077.3 516.7 1080 520C1082.7 523.3 1083.7 538 1082 548C1080.3 558 1074 570.7 1070 580C1066 589.3 1061 596.7 1058 604C1055 611.3 1053.7 615.7 1052.3 623.6C1050.9 631.5 1049 641.3 1049.5 651.5C1050 661.7 1053.9 678.1 1055 685C1056.1 691.9 1057.5 691.7 1056 693C1054.5 694.3 1048 694.3 1046 693C1044 691.7 1046 691.9 1044 685C1042 678.1 1036.3 661.7 1034.2 651.5C1032.1 641.3 1031.1 632.9 1031.4 623.6C1031.7 614.4 1033.9 604.9 1036 596C1038.1 587.1 1040.8 579.3 1044 570C1047.2 560.7 1051.3 547 1055 540Z"/>
<path style="fill:url(#oval);stroke:#222;stroke-width:1" d="M1093 461.7A63.5 45.3 -32 1 0 985.2 528.9A63.5 45.3 -32 1 0 1093 461.7Z"/>
<circle style="fill:none;stroke:#222;stroke-width:1" cx="1018.3" cy="504.4" r="28"/>
<path class="gp" d="M810.2 352L810.2 346Q810.2 340.2 816 340.2L925 340.2C940 340.2 948 352 948 366L948 398M865 352L865 340.2"/>
<path class="gp" d="M1226.8 352L1226.8 346Q1226.8 340.2 1221 340.2L1112 340.2C1097 340.2 1089 352 1089 366L1089 398M1172 352L1172 340.2"/>
<path class="gp" d="M827 552L827 571.4M847.8 552L847.8 571.4M813 660L813 646.9M863.4 660L863.4 646.9M900 571.4L807 571.4Q800.5 571.4 800.5 578L800.5 640.5Q800.5 646.9 807 646.9L900 646.9M905 571.4C925 575 937 590 940 610"/>
<path class="gp" d="M1210 552L1210 571.4M1189.2 552L1189.2 571.4M1224 660L1224 646.9M1173.6 660L1173.6 646.9M1137 571.4L1230 571.4Q1236.5 571.4 1236.5 578L1236.5 640.5Q1236.5 646.9 1230 646.9L1137 646.9M1132 571.4C1112 575 1100 590 1097 610"/>
<path class="gpi" d="M810.2 352L810.2 346Q810.2 340.2 816 340.2L925 340.2C940 340.2 948 352 948 366L948 398M865 352L865 340.2"/>
<path class="gpi" d="M1226.8 352L1226.8 346Q1226.8 340.2 1221 340.2L1112 340.2C1097 340.2 1089 352 1089 366L1089 398M1172 352L1172 340.2"/>
<path class="gpi" d="M827 552L827 571.4M847.8 552L847.8 571.4M813 660L813 646.9M863.4 660L863.4 646.9M900 571.4L807 571.4Q800.5 571.4 800.5 578L800.5 640.5Q800.5 646.9 807 646.9L900 646.9M905 571.4C925 575 937 590 940 610"/>
<path class="gpi" d="M1210 552L1210 571.4M1189.2 552L1189.2 571.4M1224 660L1224 646.9M1173.6 660L1173.6 646.9M1137 571.4L1230 571.4Q1236.5 571.4 1236.5 578L1236.5 640.5Q1236.5 646.9 1230 646.9L1137 646.9M1132 571.4C1112 575 1100 590 1097 610"/>
<path class="np" d="M775.8 406.9C779.3 407.4 791.1 407.6 797.1 410C803.1 412.4 807.3 418.7 811.8 421.5C816.3 424.3 819.8 426.7 824.3 426.7C828.8 426.7 834 424.1 838.9 421.5C843.8 418.9 848.3 413.4 853.5 411.1C858.7 408.9 865.1 408.3 870.2 408C875.3 407.7 881.7 409.2 884 409.5"/>
<path class="np" d="M1261.2 406.9C1257.7 407.4 1245.9 407.6 1239.9 410C1233.9 412.4 1229.7 418.7 1225.2 421.5C1220.7 424.3 1217.2 426.7 1212.7 426.7C1208.2 426.7 1203 424.1 1198.1 421.5C1193.2 418.9 1188.7 413.4 1183.5 411.1C1178.3 408.9 1171.9 408.3 1166.8 408C1161.7 407.7 1155.3 409.2 1153 409.5"/>
<path class="np" d="M838.9 421.5C837.5 423.9 831.9 431 830.5 436.1C829.1 441.2 830.5 449.4 830.5 452"/>
<path class="np" d="M1198.1 421.5C1199.5 423.9 1205.1 431 1206.5 436.1C1207.9 441.2 1206.5 449.4 1206.5 452"/>
<path class="np" d="M897.3 415.3C899.8 417.4 908.3 422.6 912 427.8C915.7 433 918.6 440 919.3 446.6C920 453.2 918 462.3 916.1 467.5C914.2 472.7 909.2 476.2 907.8 477.9"/>
<path class="np" d="M1139.7 415.3C1137.2 417.4 1128.7 422.6 1125 427.8C1121.3 433 1118.4 440 1117.7 446.6C1117 453.2 1119 462.3 1120.9 467.5C1122.8 472.7 1127.8 476.2 1129.2 477.9"/>
<path class="np" d="M832.6 473.7C833.6 475.8 834.7 483.4 838.9 486.2C843.1 489 852.5 488.6 857.7 490.4C862.9 492.1 865.3 494.6 870.2 496.7C875.1 498.8 883.1 502 886.9 503C890.7 504 892.2 502.6 893.2 502.5"/>
<path class="np" d="M1204.4 473.7C1203.4 475.8 1202.3 483.4 1198.1 486.2C1193.9 489 1184.5 488.6 1179.3 490.4C1174.1 492.1 1171.7 494.6 1166.8 496.7C1161.9 498.8 1153.9 502 1150.1 503C1146.3 504 1144.8 502.6 1143.8 502.5"/>
<path class="np" d="M797.1 505C798.9 502.9 802.4 495.4 807.6 492.5C812.8 489.6 823.3 488.2 828.5 487.3C833.7 486.4 837.2 487.3 838.9 487.3"/>
<path class="np" d="M1239.9 505C1238.1 502.9 1234.6 495.4 1229.4 492.5C1224.2 489.6 1213.7 488.2 1208.5 487.3C1203.3 486.4 1199.8 487.3 1198.1 487.3"/>
<path class="np" d="M826 489C821.5 490.6 804.9 493.7 799.2 498.4C793.5 503.1 793.3 510.5 791.9 517.1C790.5 523.7 792.1 533 790.9 538C789.7 543 787.1 545.3 784.6 547.4C782.1 549.5 777.3 550 775.8 550.5"/>
<path class="np" d="M1211 489C1215.5 490.6 1232.1 493.7 1237.8 498.4C1243.5 503.1 1243.7 510.5 1245.1 517.1C1246.5 523.7 1244.9 533 1246.1 538C1247.3 543 1249.9 545.3 1252.4 547.4C1254.9 549.5 1259.7 550 1261.2 550.5"/>
<path class="np" d="M824.7 576.6C824.5 578.9 822.2 585.7 823.2 590.2C824.2 594.7 827.2 601 830.5 603.8C833.8 606.6 839.3 607.1 843.1 606.9C846.9 606.7 851.8 603.4 853.5 602.7"/>
<path class="np" d="M805.9 626.7C808.6 626.5 816.7 627.3 822.2 625.7C827.7 624.1 833.7 621.1 838.9 617.3C844.1 613.5 849.3 607.2 853.5 602.7C857.7 598.2 859.7 592.8 863.9 590.2C868.1 587.6 873.1 587.1 878.6 587.1C884.1 587.1 893.9 589.9 897 590.5"/>
<path class="np" d="M1164.7 576.6C1164.5 578.9 1162.4 585.9 1163.6 590.2C1164.8 594.6 1168.5 600.4 1172 602.7C1175.5 605 1181.5 604.2 1184.5 603.8C1187.5 603.3 1189.1 600.6 1190 600"/>
<path class="np" d="M1143 626C1146.4 625.8 1158.1 626.1 1163.6 624.6C1169.1 623.1 1172.3 621.3 1176.1 617.3C1179.9 613.3 1182.4 604.8 1186.6 600.6C1190.8 596.4 1196 594 1201.2 592.3C1206.4 590.6 1212.9 590.2 1217.9 590.2C1223 590.2 1229.2 591.9 1231.5 592.3"/>
<path class="npi" d="M775.8 406.9C779.3 407.4 791.1 407.6 797.1 410C803.1 412.4 807.3 418.7 811.8 421.5C816.3 424.3 819.8 426.7 824.3 426.7C828.8 426.7 834 424.1 838.9 421.5C843.8 418.9 848.3 413.4 853.5 411.1C858.7 408.9 865.1 408.3 870.2 408C875.3 407.7 881.7 409.2 884 409.5"/>
<path class="npi" d="M1261.2 406.9C1257.7 407.4 1245.9 407.6 1239.9 410C1233.9 412.4 1229.7 418.7 1225.2 421.5C1220.7 424.3 1217.2 426.7 1212.7 426.7C1208.2 426.7 1203 424.1 1198.1 421.5C1193.2 418.9 1188.7 413.4 1183.5 411.1C1178.3 408.9 1171.9 408.3 1166.8 408C1161.7 407.7 1155.3 409.2 1153 409.5"/>
<path class="npi" d="M838.9 421.5C837.5 423.9 831.9 431 830.5 436.1C829.1 441.2 830.5 449.4 830.5 452"/>
<path class="npi" d="M1198.1 421.5C1199.5 423.9 1205.1 431 1206.5 436.1C1207.9 441.2 1206.5 449.4 1206.5 452"/>
<path class="npi" d="M897.3 415.3C899.8 417.4 908.3 422.6 912 427.8C915.7 433 918.6 440 919.3 446.6C920 453.2 918 462.3 916.1 467.5C914.2 472.7 909.2 476.2 907.8 477.9"/>
<path class="npi" d="M1139.7 415.3C1137.2 417.4 1128.7 422.6 1125 427.8C1121.3 433 1118.4 440 1117.7 446.6C1117 453.2 1119 462.3 1120.9 467.5C1122.8 472.7 1127.8 476.2 1129.2 477.9"/>
<path class="npi" d="M832.6 473.7C833.6 475.8 834.7 483.4 838.9 486.2C843.1 489 852.5 488.6 857.7 490.4C862.9 492.1 865.3 494.6 870.2 496.7C875.1 498.8 883.1 502 886.9 503C890.7 504 892.2 502.6 893.2 502.5"/>
<path class="npi" d="M1204.4 473.7C1203.4 475.8 1202.3 483.4 1198.1 486.2C1193.9 489 1184.5 488.6 1179.3 490.4C1174.1 492.1 1171.7 494.6 1166.8 496.7C1161.9 498.8 1153.9 502 1150.1 503C1146.3 504 1144.8 502.6 1143.8 502.5"/>
<path class="npi" d="M797.1 505C798.9 502.9 802.4 495.4 807.6 492.5C812.8 489.6 823.3 488.2 828.5 487.3C833.7 486.4 837.2 487.3 838.9 487.3"/>
<path class="npi" d="M1239.9 505C1238.1 502.9 1234.6 495.4 1229.4 492.5C1224.2 489.6 1213.7 488.2 1208.5 487.3C1203.3 486.4 1199.8 487.3 1198.1 487.3"/>
<path class="npi" d="M826 489C821.5 490.6 804.9 493.7 799.2 498.4C793.5 503.1 793.3 510.5 791.9 517.1C790.5 523.7 792.1 533 790.9 538C789.7 543 787.1 545.3 784.6 547.4C782.1 549.5 777.3 550 775.8 550.5"/>
<path class="npi" d="M1211 489C1215.5 490.6 1232.1 493.7 1237.8 498.4C1243.5 503.1 1243.7 510.5 1245.1 517.1C1246.5 523.7 1244.9 533 1246.1 538C1247.3 543 1249.9 545.3 1252.4 547.4C1254.9 549.5 1259.7 550 1261.2 550.5"/>
<path class="npi" d="M824.7 576.6C824.5 578.9 822.2 585.7 823.2 590.2C824.2 594.7 827.2 601 830.5 603.8C833.8 606.6 839.3 607.1 843.1 606.9C846.9 606.7 851.8 603.4 853.5 602.7"/>
<path class="npi" d="M805.9 626.7C808.6 626.5 816.7 627.3 822.2 625.7C827.7 624.1 833.7 621.1 838.9 617.3C844.1 613.5 849.3 607.2 853.5 602.7C857.7 598.2 859.7 592.8 863.9 590.2C868.1 587.6 873.1 587.1 878.6 587.1C884.1 587.1 893.9 589.9 897 590.5"/>
<path class="npi" d="M1164.7 576.6C1164.5 578.9 1162.4 585.9 1163.6 590.2C1164.8 594.6 1168.5 600.4 1172 602.7C1175.5 605 1181.5 604.2 1184.5 603.8C1187.5 603.3 1189.1 600.6 1190 600"/>
<path class="npi" d="M1143 626C1146.4 625.8 1158.1 626.1 1163.6 624.6C1169.1 623.1 1172.3 621.3 1176.1 617.3C1179.9 613.3 1182.4 604.8 1186.6 600.6C1190.8 596.4 1196 594 1201.2 592.3C1206.4 590.6 1212.9 590.2 1217.9 590.2C1223 590.2 1229.2 591.9 1231.5 592.3"/>
<path class="pb" d="M913.6 322C914 327.1 917.1 342.3 916.1 352.6C915.1 362.9 912.3 374.5 907.8 383.9C903.3 393.3 893.5 400.3 889 409C884.5 417.7 881.6 426.4 880.6 436.1C879.6 445.9 880.6 458.8 882.7 467.5C884.8 476.2 888.3 481.8 893.2 488.3C898.1 494.8 907.6 499.4 912 506.7C916.4 513.9 918.6 523.1 919.3 531.8C920 540.5 918.7 549.9 916.1 558.9C913.5 567.9 907.1 576.6 903.6 586C900.1 595.4 896 606.2 895.3 615.3C894.6 624.3 896.6 631.6 899.4 640.3C902.2 649 908.9 660.9 912 667.5C915.1 674.1 917 677.9 918 680"/>
<path class="pb" d="M1123.4 322C1123 327.1 1119.9 342.3 1120.9 352.6C1121.9 362.9 1124.7 374.5 1129.2 383.9C1133.7 393.3 1143.5 400.3 1148 409C1152.5 417.7 1155.4 426.4 1156.4 436.1C1157.4 445.9 1156.4 458.8 1154.3 467.5C1152.2 476.2 1148.7 481.8 1143.8 488.3C1138.9 494.8 1129.4 499.4 1125 506.7C1120.6 513.9 1118.4 523.1 1117.7 531.8C1117 540.5 1118.3 549.9 1120.9 558.9C1123.5 567.9 1129.9 576.6 1133.4 586C1136.9 595.4 1141 606.2 1141.7 615.3C1142.4 624.3 1140.4 631.6 1137.6 640.3C1134.8 649 1128.1 660.9 1125 667.5C1121.9 674.1 1120 677.9 1119 680"/>
<path class="pbi" d="M913.6 322C914 327.1 917.1 342.3 916.1 352.6C915.1 362.9 912.3 374.5 907.8 383.9C903.3 393.3 893.5 400.3 889 409C884.5 417.7 881.6 426.4 880.6 436.1C879.6 445.9 880.6 458.8 882.7 467.5C884.8 476.2 888.3 481.8 893.2 488.3C898.1 494.8 907.6 499.4 912 506.7C916.4 513.9 918.6 523.1 919.3 531.8C920 540.5 918.7 549.9 916.1 558.9C913.5 567.9 907.1 576.6 903.6 586C900.1 595.4 896 606.2 895.3 615.3C894.6 624.3 896.6 631.6 899.4 640.3C902.2 649 908.9 660.9 912 667.5C915.1 674.1 917 677.9 918 680"/>
<path class="pbi" d="M1123.4 322C1123 327.1 1119.9 342.3 1120.9 352.6C1121.9 362.9 1124.7 374.5 1129.2 383.9C1133.7 393.3 1143.5 400.3 1148 409C1152.5 417.7 1155.4 426.4 1156.4 436.1C1157.4 445.9 1156.4 458.8 1154.3 467.5C1152.2 476.2 1148.7 481.8 1143.8 488.3C1138.9 494.8 1129.4 499.4 1125 506.7C1120.6 513.9 1118.4 523.1 1117.7 531.8C1117 540.5 1118.3 549.9 1120.9 558.9C1123.5 567.9 1129.9 576.6 1133.4 586C1136.9 595.4 1141 606.2 1141.7 615.3C1142.4 624.3 1140.4 631.6 1137.6 640.3C1134.8 649 1128.1 660.9 1125 667.5C1121.9 674.1 1120 677.9 1119 680"/>
<circle class="pz" cx="909.7" cy="301.7" r="25"/>
<circle class="pz" cx="1127.3" cy="301.7" r="25"/>
<circle class="pz" cx="909.7" cy="301.7" r="15.7"/>
<circle class="pz" cx="1127.3" cy="301.7" r="15.7"/>
<path class="pz" d="M775.8 433A30.3 30.3 0 0 1 775.8 493.6Z"/>
<path class="pz" d="M1261.2 433A30.3 30.3 -0 0 0 1261.2 493.6Z"/>
<path class="pz" d="M903.8 685.5A20.2 20.2 0 0 1 944.2 685.5Z"/>
<path class="pz" d="M1133.2 685.5A20.2 20.2 -0 0 0 1092.8 685.5Z"/>
<path class="g" d="M1011.5 208.3L1025.7 208.3L1025.7 299Q1018.6 309 1011.5 299Z"/>
<path class="lg" d="M681.9 668.4L790 668.4L790 696L888 696L893 685L975.7 685L975.7 704.5L904.3 701.8L887.6 702.9L870.9 704.6L851.4 706.6L831.8 709.4L801.2 711.6L776.1 705.2L751 700.4L720.3 704.6L717.6 714.9L684.1 719.1L681.9 709.4Z"/>
<path class="lg" d="M1355.1 668.4L1247 668.4L1247 696L1149 696L1144 685L1061.3 685L1061.3 704.5L1132.7 701.8L1149.4 702.9L1166.1 704.6L1185.6 706.6L1205.2 709.4L1235.8 711.6L1260.9 705.2L1286 700.4L1316.7 704.6L1319.4 714.9L1352.9 719.1L1355.1 709.4Z"/>
<rect class="lg" x="674.4" y="669" width="7.5" height="40.4"/>
<rect class="lg" x="1355.5" y="695.4" width="7.3" height="13.6"/>
<polygon style="fill:#fff;stroke:#222;stroke-width:.8" points="1318.3,704.8 1354.8,710 1353.8,718.3 1320.4,717.3"/>
<path class="ln" d="M674.4 695.5L681.9 695.5"/>
<path class="ln" d="M706.4 668.4L716.2 703.8M712 668.4L719.8 702.4M759.4 668.4L751 699.6M767.7 668.4L755.2 699.6M681.9 709.4L719.8 705.2M931 685L926.5 702M937.5 685L933 702.5"/>
<path class="ln" d="M1330.6 668.4L1320.8 703.8M1325 668.4L1317.2 702.4M1277.6 668.4L1286 699.6M1269.3 668.4L1281.8 699.6M1355.1 709.4L1317.2 705.2M1106 685L1110.5 702M1099.5 685L1104 702.5"/>
<path class="gb" d="M646.4 194.3L668.7 194.3L668.7 204L680.2 204L680.2 194.3L815 194.3L815 196.4L838.2 196.4L838.2 186.4L854.9 186.4L854.9 177.6L993.7 177.6L993.7 205L992.7 205L992.7 257L890.8 257L890.8 273.6L701.7 273.6L701.7 325.2L646.4 325.2Z"/>
<path class="gb" d="M1390.6 194.3L1368.3 194.3L1368.3 204L1356.8 204L1356.8 194.3L1222 194.3L1222 196.4L1198.8 196.4L1198.8 186.4L1182.1 186.4L1182.1 177.6L1043.3 177.6L1043.3 205L1044.3 205L1044.3 257L1146.2 257L1146.2 273.6L1335.3 273.6L1335.3 325.2L1390.6 325.2Z"/>
<rect class="gb" x="646.4" y="194.3" width="22.3" height="27.6"/>
<rect class="gb" x="1368.3" y="194.3" width="22.3" height="27.6"/>
<rect class="gb" x="647.4" y="222.9" width="21.3" height="15"/>
<rect class="gb" x="1368.3" y="222.9" width="21.3" height="15"/>
<rect class="gb" x="646.4" y="237.9" width="22.9" height="87.3"/>
<rect class="gb" x="1367.7" y="237.9" width="22.9" height="87.3"/>
<rect class="gb" x="669.3" y="204" width="10.9" height="121.2"/>
<rect class="gb" x="1356.8" y="204" width="10.9" height="121.2"/>
<rect class="gb" x="680.2" y="194.3" width="33" height="27.6"/>
<rect class="gb" x="1323.8" y="194.3" width="33" height="27.6"/>
<rect class="gb" x="721.5" y="194.3" width="93.5" height="27.6"/>
<rect class="gb" x="1222" y="194.3" width="93.5" height="27.6"/>
<rect class="gb" x="680.2" y="238" width="21.5" height="87.2"/>
<rect class="gb" x="1335.3" y="238" width="21.5" height="87.2"/>
<rect class="gb" x="701.7" y="238" width="189.1" height="35.6"/>
<rect class="gb" x="1146.2" y="238" width="189.1" height="35.6"/>
<rect class="gb" x="890" y="177.6" width="73.9" height="27.6"/>
<rect class="gb" x="1073.1" y="177.6" width="73.9" height="27.6"/>
<rect class="gb" x="838.2" y="186.4" width="16.7" height="28.6"/>
<rect class="gb" x="1182.1" y="186.4" width="16.7" height="28.6"/>
<rect style="fill:url(#gbt);stroke:#000;stroke-width:2" x="854.9" y="177.6" width="28.1" height="27.1"/>
<rect style="fill:url(#gbt);stroke:#000;stroke-width:2" x="1154" y="177.6" width="28.1" height="27.1"/>
<rect style="fill:url(#pave);stroke:#111;stroke-width:1.4" x="671.4" y="243.4" width="6.3" height="34.8"/>
<rect style="fill:url(#pave);stroke:#111;stroke-width:1.4" x="1359.3" y="243.4" width="6.3" height="34.8"/>
<rect style="fill:url(#pave);stroke:#111;stroke-width:1.4" x="671.4" y="283.4" width="6.3" height="30.3"/>
<rect style="fill:url(#pave);stroke:#111;stroke-width:1.4" x="1359.3" y="283.4" width="6.3" height="30.3"/>
<rect style="fill:url(#pave);stroke:#111;stroke-width:1.4" x="680.8" y="225.3" width="35.5" height="8.5"/>
<rect style="fill:url(#pave);stroke:#111;stroke-width:1.4" x="1320.7" y="225.3" width="35.5" height="8.5"/>
<rect style="fill:url(#pave);stroke:#111;stroke-width:1.4" x="719.4" y="225.3" width="65.4" height="8.5"/>
<rect style="fill:url(#pave);stroke:#111;stroke-width:1.4" x="1252.2" y="225.3" width="65.4" height="8.5"/>
<rect style="fill:url(#pave);stroke:#111;stroke-width:1.4" x="788.3" y="225.3" width="49.7" height="8.5"/>
<rect style="fill:url(#pave);stroke:#111;stroke-width:1.4" x="1199" y="225.3" width="49.7" height="8.5"/>
<rect style="fill:url(#pave);stroke:#111;stroke-width:1.4" x="890.4" y="208.3" width="83.5" height="7.3"/>
<rect style="fill:url(#pave);stroke:#111;stroke-width:1.4" x="1063.1" y="208.3" width="83.5" height="7.3"/>
<rect style="fill:url(#pave);stroke:#111;stroke-width:1.4" x="842.8" y="208.9" width="44.4" height="24.4"/>
<rect style="fill:url(#pave);stroke:#111;stroke-width:1.4" x="1149.8" y="208.9" width="44.4" height="24.4"/>
<rect class="gl" x="713.6" y="195.8" width="7.9" height="26.2"/>
<rect class="gl" x="1315.5" y="195.8" width="7.9" height="26.2"/>
<rect style="fill:#223" x="714" y="195.8" width="7" height="3.2"/>
<rect style="fill:#223" x="1316" y="195.8" width="7" height="3.2"/>
<rect class="gl" x="883.5" y="178.5" width="5.8" height="26"/>
<rect class="gl" x="1147.7" y="178.5" width="5.8" height="26"/>
<path class="rb" d="M702.8 246.2L800.8 246.2L800.8 249.5L802.8 249.5L802.8 274L794.8 274L794.8 271.3L708.8 271.3L708.8 274L700.8 274L700.8 249.5L702.8 249.5Z"/>
<path class="rb" d="M1334.2 246.2L1236.2 246.2L1236.2 249.5L1234.2 249.5L1234.2 274L1242.2 274L1242.2 271.3L1328.2 271.3L1328.2 274L1336.2 274L1336.2 249.5L1334.2 249.5Z"/>
<path class="rb" d="M711.2 271.3L711.2 277.5L717.5 277.5L717.5 280L736.7 280L736.7 277.5L742.7 277.5L742.7 271.3"/>
<path class="rb" d="M1325.8 271.3L1325.8 277.5L1319.5 277.5L1319.5 280L1300.3 280L1300.3 277.5L1294.3 277.5L1294.3 271.3"/>
<path class="ln" d="M717.5 271.3L717.5 277.5M736.7 271.3L736.7 277.5M712.2 274L741.7 274"/>
<path class="ln" d="M1319.5 271.3L1319.5 277.5M1300.3 271.3L1300.3 277.5M1324.8 274L1295.3 274"/>
<path class="rb" d="M760.1 271.3L760.1 277.5L766.4 277.5L766.4 280L785.6 280L785.6 277.5L791.6 277.5L791.6 271.3"/>
<path class="rb" d="M1276.9 271.3L1276.9 277.5L1270.6 277.5L1270.6 280L1251.4 280L1251.4 277.5L1245.4 277.5L1245.4 271.3"/>
<path class="ln" d="M766.4 271.3L766.4 277.5M785.6 271.3L785.6 277.5M761.1 274L790.6 274"/>
<path class="ln" d="M1270.6 271.3L1270.6 277.5M1251.4 271.3L1251.4 277.5M1275.9 274L1246.4 274"/>
<rect style="fill:#c9c6b5;stroke:#111;stroke-width:.9" x="708.9" y="262.5" width="1.8" height="11.5"/>
<rect style="fill:#c9c6b5;stroke:#111;stroke-width:.9" x="1326.3" y="262.5" width="1.8" height="11.5"/>
<rect style="fill:#c9c6b5;stroke:#111;stroke-width:.9" x="743.6" y="262.5" width="1.8" height="11.5"/>
<rect style="fill:#c9c6b5;stroke:#111;stroke-width:.9" x="1291.6" y="262.5" width="1.8" height="11.5"/>
<rect style="fill:#c9c6b5;stroke:#111;stroke-width:.9" x="758.2" y="262.5" width="1.8" height="11.5"/>
<rect style="fill:#c9c6b5;stroke:#111;stroke-width:.9" x="1277" y="262.5" width="1.8" height="11.5"/>
<rect style="fill:#c9c6b5;stroke:#111;stroke-width:.9" x="792.9" y="262.5" width="1.8" height="11.5"/>
<rect style="fill:#c9c6b5;stroke:#111;stroke-width:.9" x="1242.3" y="262.5" width="1.8" height="11.5"/>
<rect style="fill:#c6c3b2;stroke:#000;stroke-width:1.6" x="712.6" y="238.6" width="20.8" height="15.9"/>
<rect style="fill:#c6c3b2;stroke:#000;stroke-width:1.6" x="1303.6" y="238.6" width="20.8" height="15.9"/>
<rect style="fill:#c6c3b2;stroke:#000;stroke-width:1.6" x="771.6" y="238.6" width="20.8" height="15.9"/>
<rect style="fill:#c6c3b2;stroke:#000;stroke-width:1.6" x="1244.6" y="238.6" width="20.8" height="15.9"/>
<path class="rb" d="M893.6 229.3L991.6 229.3L991.6 232.6L993.6 232.6L993.6 257.1L985.6 257.1L985.6 254.4L899.6 254.4L899.6 257.1L891.6 257.1L891.6 232.6L893.6 232.6Z"/>
<path class="rb" d="M1143.4 229.3L1045.4 229.3L1045.4 232.6L1043.4 232.6L1043.4 257.1L1051.4 257.1L1051.4 254.4L1137.4 254.4L1137.4 257.1L1145.4 257.1L1145.4 232.6L1143.4 232.6Z"/>
<path class="rb" d="M902 254.4L902 260.6L908.3 260.6L908.3 263.1L927.5 263.1L927.5 260.6L933.5 260.6L933.5 254.4"/>
<path class="rb" d="M1135 254.4L1135 260.6L1128.7 260.6L1128.7 263.1L1109.5 263.1L1109.5 260.6L1103.5 260.6L1103.5 254.4"/>
<path class="ln" d="M908.3 254.4L908.3 260.6M927.5 254.4L927.5 260.6M903 257.1L932.5 257.1"/>
<path class="ln" d="M1128.7 254.4L1128.7 260.6M1109.5 254.4L1109.5 260.6M1134 257.1L1104.5 257.1"/>
<path class="rb" d="M950.9 254.4L950.9 260.6L957.2 260.6L957.2 263.1L976.4 263.1L976.4 260.6L982.4 260.6L982.4 254.4"/>
<path class="rb" d="M1086.1 254.4L1086.1 260.6L1079.8 260.6L1079.8 263.1L1060.6 263.1L1060.6 260.6L1054.6 260.6L1054.6 254.4"/>
<path class="ln" d="M957.2 254.4L957.2 260.6M976.4 254.4L976.4 260.6M951.9 257.1L981.4 257.1"/>
<path class="ln" d="M1079.8 254.4L1079.8 260.6M1060.6 254.4L1060.6 260.6M1085.1 257.1L1055.6 257.1"/>
<rect style="fill:#c9c6b5;stroke:#111;stroke-width:.9" x="899.7" y="245.6" width="1.8" height="11.5"/>
<rect style="fill:#c9c6b5;stroke:#111;stroke-width:.9" x="1135.5" y="245.6" width="1.8" height="11.5"/>
<rect style="fill:#c9c6b5;stroke:#111;stroke-width:.9" x="934.4" y="245.6" width="1.8" height="11.5"/>
<rect style="fill:#c9c6b5;stroke:#111;stroke-width:.9" x="1100.8" y="245.6" width="1.8" height="11.5"/>
<rect style="fill:#c9c6b5;stroke:#111;stroke-width:.9" x="949" y="245.6" width="1.8" height="11.5"/>
<rect style="fill:#c9c6b5;stroke:#111;stroke-width:.9" x="1086.2" y="245.6" width="1.8" height="11.5"/>
<rect style="fill:#c9c6b5;stroke:#111;stroke-width:.9" x="983.7" y="245.6" width="1.8" height="11.5"/>
<rect style="fill:#c9c6b5;stroke:#111;stroke-width:.9" x="1051.5" y="245.6" width="1.8" height="11.5"/>
<rect style="fill:#c6c3b2;stroke:#000;stroke-width:1.6" x="903.4" y="221.7" width="20.8" height="15.9"/>
<rect style="fill:#c6c3b2;stroke:#000;stroke-width:1.6" x="1112.8" y="221.7" width="20.8" height="15.9"/>
<rect style="fill:#c6c3b2;stroke:#000;stroke-width:1.6" x="962.4" y="221.7" width="20.8" height="15.9"/>
<rect style="fill:#c6c3b2;stroke:#000;stroke-width:1.6" x="1053.8" y="221.7" width="20.8" height="15.9"/>
<path class="rb" d="M788.7 359.9L886.7 359.9L886.7 363.2L888.7 363.2L888.7 390.4L880.7 390.4L880.7 387.7L794.7 387.7L794.7 390.4L786.7 390.4L786.7 363.2L788.7 363.2Z"/>
<path class="rb" d="M797.1 387.7L797.1 393.9L803.4 393.9L803.4 396.4L822.6 396.4L822.6 393.9L828.6 393.9L828.6 387.7"/>
<path class="ln" d="M803.4 387.7L803.4 393.9M822.6 387.7L822.6 393.9M798.1 390.4L827.6 390.4"/>
<path class="rb" d="M846 387.7L846 393.9L852.3 393.9L852.3 396.4L871.5 396.4L871.5 393.9L877.5 393.9L877.5 387.7"/>
<path class="ln" d="M852.3 387.7L852.3 393.9M871.5 387.7L871.5 393.9M847 390.4L876.5 390.4"/>
<rect style="fill:#c9c6b5;stroke:#111;stroke-width:.9" x="794.8" y="378.9" width="1.8" height="11.5"/>
<rect style="fill:#c9c6b5;stroke:#111;stroke-width:.9" x="829.5" y="378.9" width="1.8" height="11.5"/>
<rect style="fill:#c9c6b5;stroke:#111;stroke-width:.9" x="844.1" y="378.9" width="1.8" height="11.5"/>
<rect style="fill:#c9c6b5;stroke:#111;stroke-width:.9" x="878.8" y="378.9" width="1.8" height="11.5"/>
<rect style="fill:#c6c3b2;stroke:#000;stroke-width:1.6" x="798.5" y="352.3" width="20.8" height="15.9"/>
<rect style="fill:#c6c3b2;stroke:#000;stroke-width:1.6" x="857.5" y="352.3" width="20.8" height="15.9"/>
<path class="rb" d="M801.3 516.8L899.3 516.8L899.3 520.1L901.3 520.1L901.3 547.3L893.3 547.3L893.3 544.6L807.3 544.6L807.3 547.3L799.3 547.3L799.3 520.1L801.3 520.1Z"/>
<path class="rb" d="M809.7 544.6L809.7 550.8L816 550.8L816 553.3L835.2 553.3L835.2 550.8L841.2 550.8L841.2 544.6"/>
<path class="ln" d="M816 544.6L816 550.8M835.2 544.6L835.2 550.8M810.7 547.3L840.2 547.3"/>
<path class="rb" d="M858.6 544.6L858.6 550.8L864.9 550.8L864.9 553.3L884.1 553.3L884.1 550.8L890.1 550.8L890.1 544.6"/>
<path class="ln" d="M864.9 544.6L864.9 550.8M884.1 544.6L884.1 550.8M859.6 547.3L889.1 547.3"/>
<rect style="fill:#c9c6b5;stroke:#111;stroke-width:.9" x="807.4" y="535.8" width="1.8" height="11.5"/>
<rect style="fill:#c9c6b5;stroke:#111;stroke-width:.9" x="842.1" y="535.8" width="1.8" height="11.5"/>
<rect style="fill:#c9c6b5;stroke:#111;stroke-width:.9" x="856.7" y="535.8" width="1.8" height="11.5"/>
<rect style="fill:#c9c6b5;stroke:#111;stroke-width:.9" x="891.4" y="535.8" width="1.8" height="11.5"/>
<rect style="fill:#c6c3b2;stroke:#000;stroke-width:1.6" x="811.1" y="509.2" width="20.8" height="15.9"/>
<rect style="fill:#c6c3b2;stroke:#000;stroke-width:1.6" x="870.1" y="509.2" width="20.8" height="15.9"/>
<path class="rb" d="M789.3 667.9L887.3 667.9L887.3 671.2L889.3 671.2L889.3 698.4L881.3 698.4L881.3 695.7L795.3 695.7L795.3 698.4L787.3 698.4L787.3 671.2L789.3 671.2Z"/>
<path class="rb" d="M797.7 695.7L797.7 701.9L804 701.9L804 704.4L823.2 704.4L823.2 701.9L829.2 701.9L829.2 695.7"/>
<path class="ln" d="M804 695.7L804 701.9M823.2 695.7L823.2 701.9M798.7 698.4L828.2 698.4"/>
<path class="rb" d="M846.6 695.7L846.6 701.9L852.9 701.9L852.9 704.4L872.1 704.4L872.1 701.9L878.1 701.9L878.1 695.7"/>
<path class="ln" d="M852.9 695.7L852.9 701.9M872.1 695.7L872.1 701.9M847.6 698.4L877.1 698.4"/>
<rect style="fill:#c9c6b5;stroke:#111;stroke-width:.9" x="795.4" y="686.9" width="1.8" height="11.5"/>
<rect style="fill:#c9c6b5;stroke:#111;stroke-width:.9" x="830.1" y="686.9" width="1.8" height="11.5"/>
<rect style="fill:#c9c6b5;stroke:#111;stroke-width:.9" x="844.7" y="686.9" width="1.8" height="11.5"/>
<rect style="fill:#c9c6b5;stroke:#111;stroke-width:.9" x="879.4" y="686.9" width="1.8" height="11.5"/>
<rect style="fill:#c6c3b2;stroke:#000;stroke-width:1.6" x="799.1" y="660.3" width="20.8" height="15.9"/>
<rect style="fill:#c6c3b2;stroke:#000;stroke-width:1.6" x="858.1" y="660.3" width="20.8" height="15.9"/>
<path class="rb" d="M1152.4 366.7L1250.4 366.7L1250.4 370L1252.4 370L1252.4 397.2L1244.4 397.2L1244.4 394.5L1158.4 394.5L1158.4 397.2L1150.4 397.2L1150.4 370L1152.4 370Z"/>
<path class="rb" d="M1160.8 394.5L1160.8 400.7L1167.1 400.7L1167.1 403.2L1186.3 403.2L1186.3 400.7L1192.3 400.7L1192.3 394.5"/>
<path class="ln" d="M1167.1 394.5L1167.1 400.7M1186.3 394.5L1186.3 400.7M1161.8 397.2L1191.3 397.2"/>
<path class="rb" d="M1209.7 394.5L1209.7 400.7L1216 400.7L1216 403.2L1235.2 403.2L1235.2 400.7L1241.2 400.7L1241.2 394.5"/>
<path class="ln" d="M1216 394.5L1216 400.7M1235.2 394.5L1235.2 400.7M1210.7 397.2L1240.2 397.2"/>
<rect style="fill:#c9c6b5;stroke:#111;stroke-width:.9" x="1158.5" y="385.7" width="1.8" height="11.5"/>
<rect style="fill:#c9c6b5;stroke:#111;stroke-width:.9" x="1193.2" y="385.7" width="1.8" height="11.5"/>
<rect style="fill:#c9c6b5;stroke:#111;stroke-width:.9" x="1207.8" y="385.7" width="1.8" height="11.5"/>
<rect style="fill:#c9c6b5;stroke:#111;stroke-width:.9" x="1242.5" y="385.7" width="1.8" height="11.5"/>
<rect style="fill:#c6c3b2;stroke:#000;stroke-width:1.6" x="1162.2" y="359.1" width="20.8" height="15.9"/>
<rect style="fill:#c6c3b2;stroke:#000;stroke-width:1.6" x="1221.2" y="359.1" width="20.8" height="15.9"/>
<path class="rb" d="M1162.2 523.9L1260.2 523.9L1260.2 527.2L1262.2 527.2L1262.2 554.4L1254.2 554.4L1254.2 551.7L1168.2 551.7L1168.2 554.4L1160.2 554.4L1160.2 527.2L1162.2 527.2Z"/>
<path class="rb" d="M1170.6 551.7L1170.6 557.9L1176.9 557.9L1176.9 560.4L1196.1 560.4L1196.1 557.9L1202.1 557.9L1202.1 551.7"/>
<path class="ln" d="M1176.9 551.7L1176.9 557.9M1196.1 551.7L1196.1 557.9M1171.6 554.4L1201.1 554.4"/>
<path class="rb" d="M1219.5 551.7L1219.5 557.9L1225.8 557.9L1225.8 560.4L1245 560.4L1245 557.9L1251 557.9L1251 551.7"/>
<path class="ln" d="M1225.8 551.7L1225.8 557.9M1245 551.7L1245 557.9M1220.5 554.4L1250 554.4"/>
<rect style="fill:#c9c6b5;stroke:#111;stroke-width:.9" x="1168.3" y="542.9" width="1.8" height="11.5"/>
<rect style="fill:#c9c6b5;stroke:#111;stroke-width:.9" x="1203" y="542.9" width="1.8" height="11.5"/>
<rect style="fill:#c9c6b5;stroke:#111;stroke-width:.9" x="1217.6" y="542.9" width="1.8" height="11.5"/>
<rect style="fill:#c9c6b5;stroke:#111;stroke-width:.9" x="1252.3" y="542.9" width="1.8" height="11.5"/>
<rect style="fill:#c6c3b2;stroke:#000;stroke-width:1.6" x="1172" y="516.3" width="20.8" height="15.9"/>
<rect style="fill:#c6c3b2;stroke:#000;stroke-width:1.6" x="1231" y="516.3" width="20.8" height="15.9"/>
<path class="rb" d="M1149.6 673.1L1247.6 673.1L1247.6 676.4L1249.6 676.4L1249.6 703.6L1241.6 703.6L1241.6 700.9L1155.6 700.9L1155.6 703.6L1147.6 703.6L1147.6 676.4L1149.6 676.4Z"/>
<path class="rb" d="M1158 700.9L1158 707.1L1164.3 707.1L1164.3 709.6L1183.5 709.6L1183.5 707.1L1189.5 707.1L1189.5 700.9"/>
<path class="ln" d="M1164.3 700.9L1164.3 707.1M1183.5 700.9L1183.5 707.1M1159 703.6L1188.5 703.6"/>
<path class="rb" d="M1206.9 700.9L1206.9 707.1L1213.2 707.1L1213.2 709.6L1232.4 709.6L1232.4 707.1L1238.4 707.1L1238.4 700.9"/>
<path class="ln" d="M1213.2 700.9L1213.2 707.1M1232.4 700.9L1232.4 707.1M1207.9 703.6L1237.4 703.6"/>
<rect style="fill:#c9c6b5;stroke:#111;stroke-width:.9" x="1155.7" y="692.1" width="1.8" height="11.5"/>
<rect style="fill:#c9c6b5;stroke:#111;stroke-width:.9" x="1190.4" y="692.1" width="1.8" height="11.5"/>
<rect style="fill:#c9c6b5;stroke:#111;stroke-width:.9" x="1205" y="692.1" width="1.8" height="11.5"/>
<rect style="fill:#c9c6b5;stroke:#111;stroke-width:.9" x="1239.7" y="692.1" width="1.8" height="11.5"/>
<rect style="fill:#c6c3b2;stroke:#000;stroke-width:1.6" x="1159.4" y="665.5" width="20.8" height="15.9"/>
<rect style="fill:#c6c3b2;stroke:#000;stroke-width:1.6" x="1218.4" y="665.5" width="20.8" height="15.9"/>
<rect style="fill:#b7b4a5;stroke:#111;stroke-width:1" x="678.7" y="401.4" width="77.3" height="226.1"/>
<rect style="fill:#b7b4a5;stroke:#111;stroke-width:1" x="1281" y="401.4" width="77.3" height="226.1"/>
<rect class="gl" x="699.6" y="385.3" width="35.4" height="6.9"/>
<rect class="gl" x="1302" y="385.3" width="35.4" height="6.9"/>
<rect class="gl" x="699.6" y="636.6" width="35.4" height="6.9"/>
<rect class="gl" x="1302" y="636.6" width="35.4" height="6.9"/>
<rect style="fill:#b1ae9f;stroke:#111;stroke-width:1" x="682.5" y="393.5" width="68.8" height="7.9"/>
<rect style="fill:#b1ae9f;stroke:#111;stroke-width:1" x="1285.7" y="393.5" width="68.8" height="7.9"/>
<rect style="fill:#b1ae9f;stroke:#111;stroke-width:1" x="682.5" y="627.4" width="68.8" height="7.9"/>
<rect style="fill:#b1ae9f;stroke:#111;stroke-width:1" x="1285.7" y="627.4" width="68.8" height="7.9"/>
<rect style="fill:#b1ae9f;stroke:#000;stroke-width:1.6" x="689.8" y="392" width="54.2" height="9.4"/>
<rect style="fill:#b1ae9f;stroke:#000;stroke-width:1.6" x="1293" y="392" width="54.2" height="9.4"/>
<rect style="fill:#b1ae9f;stroke:#000;stroke-width:1.6" x="689.8" y="627.4" width="54.2" height="9.4"/>
<rect style="fill:#b1ae9f;stroke:#000;stroke-width:1.6" x="1293" y="627.4" width="54.2" height="9.4"/>
<rect class="gl" x="691.9" y="394" width="50.1" height="7"/>
<rect class="gl" x="1295" y="394" width="50.1" height="7"/>
<rect class="gl" x="691.9" y="627.8" width="50.1" height="7"/>
<rect class="gl" x="1295" y="627.8" width="50.1" height="7"/>
<rect style="fill:#b1ae9f;stroke:#111;stroke-width:1" x="678.7" y="401.4" width="77.3" height="5.9"/>
<rect style="fill:#b1ae9f;stroke:#111;stroke-width:1" x="1281" y="401.4" width="77.3" height="5.9"/>
<rect style="fill:#b1ae9f;stroke:#111;stroke-width:1" x="678.7" y="621.5" width="77.3" height="5.9"/>
<rect style="fill:#b1ae9f;stroke:#111;stroke-width:1" x="1281" y="621.5" width="77.3" height="5.9"/>
<rect style="fill:#d4ebf2;stroke:#000;stroke-width:1.4" x="671.4" y="407.3" width="90.8" height="25"/>
<rect style="fill:#d4ebf2;stroke:#000;stroke-width:1.4" x="1274.8" y="407.3" width="90.8" height="25"/>
<rect style="fill:#d4ebf2;stroke:#000;stroke-width:1.4" x="671.4" y="596.5" width="90.8" height="25"/>
<rect style="fill:#d4ebf2;stroke:#000;stroke-width:1.4" x="1274.8" y="596.5" width="90.8" height="25"/>
<rect style="fill:url(#wst);stroke:#000;stroke-width:1.4" x="678.9" y="408.3" width="76.7" height="23"/>
<rect style="fill:url(#wst);stroke:#000;stroke-width:1.4" x="1281.4" y="408.3" width="76.7" height="23"/>
<rect style="fill:url(#wst);stroke:#000;stroke-width:1.4" x="678.9" y="597.5" width="76.7" height="23"/>
<rect style="fill:url(#wst);stroke:#000;stroke-width:1.4" x="1281.4" y="597.5" width="76.7" height="23"/>
<rect style="fill:#b1ae9f;stroke:#111;stroke-width:1" x="678.7" y="432.3" width="77.3" height="5.7"/>
<rect style="fill:#b1ae9f;stroke:#111;stroke-width:1" x="1281" y="432.3" width="77.3" height="5.7"/>
<rect style="fill:#b1ae9f;stroke:#111;stroke-width:1" x="678.7" y="590.8" width="77.3" height="5.7"/>
<rect style="fill:#b1ae9f;stroke:#111;stroke-width:1" x="1281" y="590.8" width="77.3" height="5.7"/>
<rect style="fill:#b1ae9f;stroke:#111;stroke-width:1" x="682.5" y="438" width="68.8" height="8"/>
<rect style="fill:#b1ae9f;stroke:#111;stroke-width:1" x="1285.7" y="438" width="68.8" height="8"/>
<rect style="fill:#b1ae9f;stroke:#111;stroke-width:1" x="682.5" y="582.8" width="68.8" height="8"/>
<rect style="fill:#b1ae9f;stroke:#111;stroke-width:1" x="1285.7" y="582.8" width="68.8" height="8"/>
<rect class="gl" x="691.9" y="438.6" width="50.1" height="6.7"/>
<rect class="gl" x="1295" y="438.6" width="50.1" height="6.7"/>
<rect class="gl" x="691.9" y="583.5" width="50.1" height="6.7"/>
<rect class="gl" x="1295" y="583.5" width="50.1" height="6.7"/>
<rect style="fill:#b1ae9f;stroke:#111;stroke-width:1" x="682.5" y="446.3" width="69.3" height="7.5"/>
<rect style="fill:#b1ae9f;stroke:#111;stroke-width:1" x="1285.2" y="446.3" width="69.3" height="7.5"/>
<rect style="fill:#b1ae9f;stroke:#111;stroke-width:1" x="682.5" y="575" width="69.3" height="7.5"/>
<rect style="fill:#b1ae9f;stroke:#111;stroke-width:1" x="1285.2" y="575" width="69.3" height="7.5"/>
<rect style="fill:url(#roofst);stroke:#000;stroke-width:1.6" x="680.2" y="454.7" width="72.2" height="119.3"/>
<rect style="fill:url(#roofst);stroke:#000;stroke-width:1.6" x="1284.6" y="454.7" width="72.2" height="119.3"/>
<rect style="fill:url(#dense);stroke:none" x="680.6" y="455" width="11.4" height="118.6"/>
<rect style="fill:url(#dense);stroke:none" x="1345" y="455" width="11.4" height="118.6"/>
<rect style="fill:#111" x="750" y="455" width="2" height="118.6"/>
<rect style="fill:#111" x="1285" y="455" width="2" height="118.6"/>
<rect style="fill:url(#glg);stroke:#333;stroke-width:1" x="756.4" y="455.3" width="11.1" height="117.9"/>
<rect style="fill:url(#glg);stroke:#333;stroke-width:1" x="1269.5" y="455.3" width="11.1" height="117.9"/>
<rect style="fill:url(#glg);stroke:#333;stroke-width:1" x="665.6" y="485.6" width="12.1" height="57.4"/>
<rect style="fill:url(#glg);stroke:#333;stroke-width:1" x="1359.3" y="485.6" width="12.1" height="57.4"/>
<path class="ge" d="M971.2 417.4A30.3 21.5 12 1 0 912 404.8A30.3 21.5 12 1 0 971.2 417.4Z"/>
<path class="ge" d="M1125.1 404.2A30.3 21.5 -12 1 0 1065.9 416.8A30.3 21.5 -12 1 0 1125.1 404.2Z"/>
<path class="ge" d="M971.2 612.1A30.3 21.5 -12 1 0 912 624.7A30.3 21.5 -12 1 0 971.2 612.1Z"/>
<path class="ge" d="M1125.1 625.2A30.3 21.5 12 1 0 1065.9 612.6A30.3 21.5 12 1 0 1125.1 625.2Z"/>
<polygon style="fill:url(#hatch);stroke:#111;stroke-width:1" points="1007,375 1027,381 1024,396 1002,390"/>
<polygon style="fill:url(#hatch);stroke:#111;stroke-width:1" points="995,608 1020,603 1029,615 1005,621"/>
<rect style="fill:#0a0a0a;stroke:#000" x="947.5" y="499.5" width="8.3" height="27"/>
<path class="wb" d="M996.6 346.3C1000.4 347 1005.5 348.6 1008 351C1010.5 353.4 1011.6 357.1 1011.9 360.8C1012.2 364.6 1011.5 368.6 1010 373.5C1008.5 378.4 1005.4 384.4 1003 390C1000.6 395.6 997.7 401.6 995.5 406.9C993.3 412.2 991.4 417.1 990 422C988.6 426.9 987.8 431 987.1 436.1C986.5 441.2 987.1 448.2 986.1 452.8C985.1 457.4 982.6 460.9 981 464C979.4 467.1 978.2 468.8 976.7 471.6C975.2 474.4 973.4 477.9 972 481C970.6 484.1 970 487.7 968.3 490.4C966.6 493.1 964.8 495.2 962 497C959.2 498.8 954.6 500.6 951.6 500.9C948.6 501.1 945.8 500.3 944 498.5C942.2 496.7 941.2 493.4 940.6 490C940 486.6 940 481.9 940.1 477.9C940.2 473.9 940.6 469.5 941 466C941.4 462.5 941.7 460.3 942.2 457C942.7 453.7 943.3 450.2 944 446C944.7 441.8 945 436.3 946.5 432C948 427.7 951.1 426.3 953 420C954.9 413.7 956.4 401.1 957.9 394.4C959.4 387.7 960.8 384 962.1 379.8C963.5 375.6 964.6 372.1 966 369C967.4 365.9 968.6 363.8 970.4 361C972.2 358.2 974.6 354.3 977 352C979.4 349.7 981.7 347.9 985 347C988.3 346.1 992.8 345.6 996.6 346.3Z"/>
<path class="wb" d="M1055 366C1058.7 366.4 1064.2 367.2 1068 369C1071.8 370.8 1075 373.7 1078 377C1081 380.3 1085.2 384.9 1086 388.7C1086.8 392.5 1084.8 396.1 1083 400C1081.2 403.9 1077.8 408 1075 412C1072.2 416 1070.2 421.4 1066 424C1061.8 426.6 1055.5 427.2 1050 427.8C1044.5 428.4 1037.1 428.8 1033 427.8C1028.9 426.8 1027.2 424.3 1025.5 422C1023.8 419.7 1023.2 417.5 1023 413.8C1022.8 410.1 1023.5 404.6 1024 400C1024.5 395.4 1024.9 390.1 1025.9 385.9C1026.9 381.7 1027.9 377.8 1030 375C1032.1 372.2 1035.7 370.6 1038.4 369.2C1041.1 367.8 1043.2 367 1046 366.5C1048.8 366 1051.3 365.6 1055 366Z"/>
<path class="wb" d="M952 525.5C955 525.3 959 525.8 961 527C963 528.2 963.5 529.4 964.2 533C964.9 536.6 964.6 544 965.2 548.5C965.8 553 966.6 555.8 968 560C969.4 564.2 971.6 569.2 973.6 573.5C975.6 577.8 977.8 581.8 980 586C982.2 590.2 984.9 595.1 987.1 598.6C989.3 602.1 990.9 604.2 993 607C995.1 609.8 996.8 612.2 999.6 615.3C1002.4 618.4 1005.8 621.2 1010 625.7C1014.2 630.2 1021.7 637.6 1025 642C1028.3 646.4 1029.2 648.1 1030 652C1030.8 655.9 1030.8 661.6 1030 665.4C1029.2 669.2 1027.3 672.2 1025 675C1022.7 677.8 1019.6 680.2 1016.1 682C1012.6 683.8 1007.7 685 1004 685.5C1000.3 686 997.3 685.9 993.8 685C990.3 684.1 986.1 682.3 983 680C979.9 677.7 977.1 673.8 975 671C972.9 668.2 972.2 666.8 970.4 663.3C968.6 659.8 966.1 654.9 964 650C961.9 645.1 959.9 640.3 957.9 634C955.9 627.7 953.7 619.3 952 612C950.3 604.7 948.7 596.2 947.5 590.2C946.3 584.2 945.7 580.5 945 576C944.3 571.5 943.9 567.8 943.3 563.1C942.7 558.4 942 552.7 941.5 548C941 543.3 939.9 538.3 940.1 535C940.4 531.7 941 529.6 943 528C945 526.4 949 525.7 952 525.5Z"/>
<path class="wb" d="M1083 540C1087.2 538.9 1090.8 539.2 1094 542C1097.2 544.8 1101.5 552 1102.5 556.7C1103.5 561.4 1101.8 563.5 1100 570C1098.2 576.5 1094.2 589 1091.4 595.7C1088.6 602.4 1088.1 606.5 1083 610C1077.9 613.5 1067.9 615.5 1060.7 616.7C1053.5 618 1044.7 617.5 1040 617.5C1035.3 617.5 1036.1 618.3 1032.8 616.7C1029.5 615.1 1023.6 612.5 1020 608C1016.4 603.5 1012.6 594.4 1011 590C1009.4 585.6 1009.6 585.9 1010.5 581.8C1011.4 577.6 1013.7 568.9 1016.1 565.1C1018.5 561.3 1021.3 560.4 1025 559C1028.7 557.6 1033.4 557.9 1038.4 556.7C1043.4 555.5 1049.9 553.4 1055 552C1060.1 550.6 1064.4 550.4 1069.1 548.4C1073.8 546.4 1078.8 541.1 1083 540Z"/>
<path class="ge" d="M971.2 417.4A30.3 21.5 12 1 0 912 404.8A30.3 21.5 12 1 0 971.2 417.4Z"/>
<path class="ge" d="M1125.1 404.2A30.3 21.5 -12 1 0 1065.9 416.8A30.3 21.5 -12 1 0 1125.1 404.2Z"/>
<path class="ge" d="M971.2 612.1A30.3 21.5 -12 1 0 912 624.7A30.3 21.5 -12 1 0 971.2 612.1Z"/>
<path class="ge" d="M1125.1 625.2A30.3 21.5 12 1 0 1065.9 612.6A30.3 21.5 12 1 0 1125.1 625.2Z"/>
<path class="ln" style="stroke:#000;stroke-width:3.2" d="M903.2 705.9L906 711.4L935.3 715.6L942.2 707.2"/>
<path class="ln" style="stroke:#000;stroke-width:3.2" d="M1133.8 705.9L1131 711.4L1101.7 715.6L1094.8 707.2"/>
<path class="ln" style="stroke:#fff;stroke-width:1.6" d="M903.2 705.9L906 711.4L935.3 715.6L942.2 707.2"/>
<path class="ln" style="stroke:#fff;stroke-width:1.6" d="M1133.8 705.9L1131 711.4L1101.7 715.6L1094.8 707.2"/>
<path class="ln" style="stroke:#222;stroke-width:.8" d="M869.8 735L869.8 791L943.6 791M866 740L866 795L940 795M943.6 735L943.6 725L975 725"/>
<path class="ln" style="stroke:#222;stroke-width:.8" d="M1167.2 735L1167.2 791L1093.4 791M1171 740L1171 795L1097 795M1093.4 735L1093.4 725L1062 725"/>
<polyline style="fill:none;stroke:#222;stroke-width:3.9999999999999996;stroke-linecap:butt" points="720.3,704.6 751,700.4 776.1,705.2 801.2,711.6 831.8,709.4 851.4,706.6 870.9,704.6 887.6,702.9 904.3,701.8"/>
<polyline style="fill:none;stroke:#222;stroke-width:3.9999999999999996;stroke-linecap:butt" points="1316.7,704.6 1286,700.4 1260.9,705.2 1235.8,711.6 1205.2,709.4 1185.6,706.6 1166.1,704.6 1149.4,702.9 1132.7,701.8"/>
<polyline style="fill:none;stroke:#222;stroke-width:4.6;stroke-linecap:butt" points="636.7,735.3 661.8,730.3 686.9,726.9 700.8,728 728.7,734.4 751,737.2 770.5,735.8 787.2,731.7 815.1,730.8 837.4,728.9 856.9,733 875.1,735.3"/>
<polyline style="fill:none;stroke:#222;stroke-width:4.6;stroke-linecap:butt" points="1400.3,735.3 1375.2,730.3 1350.1,726.9 1336.2,728 1308.3,734.4 1286,737.2 1266.5,735.8 1249.8,731.7 1221.9,730.8 1199.6,728.9 1180.1,733 1161.9,735.3"/>
<polyline style="fill:none;stroke:#222;stroke-width:4.6;stroke-linecap:butt" points="735.7,704 730.1,731"/>
<polyline style="fill:none;stroke:#222;stroke-width:4.6;stroke-linecap:butt" points="809.5,711 813.7,731.7"/>
<polyline style="fill:none;stroke:#222;stroke-width:4.6;stroke-linecap:butt" points="865.3,706 859.7,732.5"/>
<polyline style="fill:none;stroke:#f0d2ad;stroke-width:2.6;stroke-linecap:butt" points="720.3,704.6 751,700.4 776.1,705.2 801.2,711.6 831.8,709.4 851.4,706.6 870.9,704.6 887.6,702.9 904.3,701.8"/>
<polyline style="fill:none;stroke:#f0d2ad;stroke-width:2.6;stroke-linecap:butt" points="1316.7,704.6 1286,700.4 1260.9,705.2 1235.8,711.6 1205.2,709.4 1185.6,706.6 1166.1,704.6 1149.4,702.9 1132.7,701.8"/>
<polyline style="fill:none;stroke:#f0d2ad;stroke-width:3.2;stroke-linecap:butt" points="636.7,735.3 661.8,730.3 686.9,726.9 700.8,728 728.7,734.4 751,737.2 770.5,735.8 787.2,731.7 815.1,730.8 837.4,728.9 856.9,733 875.1,735.3"/>
<polyline style="fill:none;stroke:#f0d2ad;stroke-width:3.2;stroke-linecap:butt" points="1400.3,735.3 1375.2,730.3 1350.1,726.9 1336.2,728 1308.3,734.4 1286,737.2 1266.5,735.8 1249.8,731.7 1221.9,730.8 1199.6,728.9 1180.1,733 1161.9,735.3"/>
<polyline style="fill:none;stroke:#f0d2ad;stroke-width:3.2;stroke-linecap:butt" points="735.7,704 730.1,731"/>
<polyline style="fill:none;stroke:#f0d2ad;stroke-width:3.2;stroke-linecap:butt" points="809.5,711 813.7,731.7"/>
<polyline style="fill:none;stroke:#f0d2ad;stroke-width:3.2;stroke-linecap:butt" points="865.3,706 859.7,732.5"/>
<path class="ln" style="stroke:#f0d2ad;stroke-width:2.6" d="M942.2 704L975.7 704.5"/>
<path class="ln" style="stroke:#f0d2ad;stroke-width:2.6" d="M1094.8 704L1061.3 704.5"/>
<path style="fill:#c7c3b0;stroke:#111;stroke-width:1" d="M641.7 738L661.8 732.6L686.9 729.2L700.8 730.3L728.7 736.7L751 739.5L770.5 738.1L787.2 734L815.1 733.1L837.4 731.2L856.9 735.3L870.9 737.2L870.9 791.6L887.6 791.6L887.6 830L893 839L915.5 855.7Q929 864 921 880.8Q915 886 887.6 886.4Q870 886.5 856.9 889.1Q843 893 831.8 898.9L809.5 903.1L809.5 896.1L682.7 896.1L682.7 825L649.3 822.2L642.3 786Z"/>
<path style="fill:#c7c3b0;stroke:#111;stroke-width:1" d="M1395.3 738L1375.2 732.6L1350.1 729.2L1336.2 730.3L1308.3 736.7L1286 739.5L1266.5 738.1L1249.8 734L1221.9 733.1L1199.6 731.2L1180.1 735.3L1166.1 737.2L1166.1 791.6L1149.4 791.6L1149.4 830L1144 839L1121.5 855.7Q1108 864 1116 880.8Q1122 886 1149.4 886.4Q1167 886.5 1180.1 889.1Q1194 893 1205.2 898.9L1227.5 903.1L1227.5 896.1L1354.3 896.1L1354.3 825L1387.7 822.2L1394.7 786Z"/>
<path style="fill:#000;stroke:none" d="M666.3 735.2V767.6H671.1V735.2ZM666.3 802.7V822H671.1V802.7ZM675.1 734.1V771.5H679.9V734.1ZM675.1 806.5V822H679.9V806.5ZM684 733.1V775.4H688.8V733.1ZM684 810.3V822H688.8V810.3ZM692.8 733.6V779.2H697.6V733.6ZM692.8 813.8V854.3H697.6V813.8ZM701.6 734.7V783.3H706.4V734.7ZM701.6 817.1V854.3H706.4V817.1ZM710.5 736.8V787.3H715.3V736.8ZM710.5 820.3V854.3H715.3V820.3ZM719.3 738.8V791.3H724.1V738.8ZM719.3 823.5V854.3H724.1V823.5ZM728.1 740.7V795.4H732.9V740.7ZM728.1 826.2V889.5H732.9V826.2ZM736.9 741.9V799.4H741.7V741.9ZM736.9 829V889.5H741.7V829ZM745.8 743.1V803.4H750.6V743.1ZM745.8 831.7V889.5H750.6V831.7ZM754.6 743.1V806.4H759.4V743.1ZM754.6 834.1V889.5H759.4V834.1ZM763.4 742.4V809.3H768.2V742.4ZM763.4 836.2V889.5H768.2V836.2ZM772.3 741.1V812.3H777.1V741.1ZM772.3 838.3V889.5H777.1V838.3ZM781.1 738.9V815.2H785.9V738.9ZM781.1 840.4V889.5H785.9V840.4ZM789.9 737.8V817.7H794.7V737.8ZM789.9 842.5V889.5H794.7V842.5ZM798.8 737.5V819.8H803.6V737.5ZM798.8 844.7V889.5H803.6V844.7ZM807.6 737.2V822H812.4V737.2ZM816.4 736.8V824.2H821.2V736.8ZM825.2 736.2V826.2H830V736.2ZM834.1 735.6V828.2H838.9V735.6ZM842.9 736.9V830.1H847.7V736.9ZM851.7 738.5V832.1H856.5V738.5ZM860.6 739.8V833.9H865.4V739.8ZM871.5 793V828H876.3V793ZM880.3 793V828H885.1V793Z"/>
<path style="fill:#000;stroke:none" d="M1370.7 735.2V767.6H1365.9V735.2ZM1370.7 802.7V822H1365.9V802.7ZM1361.9 734.1V771.5H1357.1V734.1ZM1361.9 806.5V822H1357.1V806.5ZM1353 733.1V775.4H1348.2V733.1ZM1353 810.3V822H1348.2V810.3ZM1344.2 733.6V779.2H1339.4V733.6ZM1344.2 813.8V854.3H1339.4V813.8ZM1335.4 734.7V783.3H1330.6V734.7ZM1335.4 817.1V854.3H1330.6V817.1ZM1326.5 736.8V787.3H1321.7V736.8ZM1326.5 820.3V854.3H1321.7V820.3ZM1317.7 738.8V791.3H1312.9V738.8ZM1317.7 823.5V854.3H1312.9V823.5ZM1308.9 740.7V795.4H1304.1V740.7ZM1308.9 826.2V889.5H1304.1V826.2ZM1300.1 741.9V799.4H1295.3V741.9ZM1300.1 829V889.5H1295.3V829ZM1291.2 743.1V803.4H1286.4V743.1ZM1291.2 831.7V889.5H1286.4V831.7ZM1282.4 743.1V806.4H1277.6V743.1ZM1282.4 834.1V889.5H1277.6V834.1ZM1273.6 742.4V809.3H1268.8V742.4ZM1273.6 836.2V889.5H1268.8V836.2ZM1264.7 741.1V812.3H1259.9V741.1ZM1264.7 838.3V889.5H1259.9V838.3ZM1255.9 738.9V815.2H1251.1V738.9ZM1255.9 840.4V889.5H1251.1V840.4ZM1247.1 737.8V817.7H1242.3V737.8ZM1247.1 842.5V889.5H1242.3V842.5ZM1238.2 737.5V819.8H1233.4V737.5ZM1238.2 844.7V889.5H1233.4V844.7ZM1229.4 737.2V822H1224.6V737.2ZM1220.6 736.8V824.2H1215.8V736.8ZM1211.8 736.2V826.2H1207V736.2ZM1202.9 735.6V828.2H1198.1V735.6ZM1194.1 736.9V830.1H1189.3V736.9ZM1185.3 738.5V832.1H1180.5V738.5ZM1176.4 739.8V833.9H1171.6V739.8ZM1165.5 793V828H1160.7V793ZM1156.7 793V828H1151.9V793Z"/>
<rect style="fill:#cfcbb8;stroke:#000;stroke-width:1.8" x="684.1" y="861.3" width="40.4" height="34"/>
<rect style="fill:#cfcbb8;stroke:#000;stroke-width:1.8" x="1312.5" y="861.3" width="40.4" height="34"/>
<path class="ln" style="stroke:#000;stroke-width:2.6" d="M682.7 897L809.5 897"/>
<path class="ln" style="stroke:#000;stroke-width:2.6" d="M1354.3 897L1227.5 897"/>
<path class="ln" style="stroke:#000;stroke-width:2.6" d="M809.5 903.6L831.8 899.4Q843 893.5 856.9 889.6Q870 887 887.6 886.9Q915 886.5 921.3 881Q929 864 917 856.5"/>
<path class="ln" style="stroke:#000;stroke-width:2.6" d="M1227.5 903.6L1205.2 899.4Q1194 893.5 1180.1 889.6Q1167 887 1149.4 886.9Q1122 886.5 1115.7 881Q1108 864 1120 856.5"/>
<path class="ln" d="M812.3 827.8L809.5 896.1"/>
<path class="ln" d="M1224.7 827.8L1227.5 896.1"/>
<path class="ln" style="stroke:#222;stroke-width:.8" d="M926 868L943 868L943 878L938 878L938 886L930 886L930 892L921 892"/>
<path class="ln" style="stroke:#222;stroke-width:.8" d="M1111 868L1094 868L1094 878L1099 878L1099 886L1107 886L1107 892L1116 892"/>
<circle style="fill:none;stroke:#000;stroke-width:11.6" cx="1018" cy="764.2" r="72"/>
<circle style="fill:none;stroke:#000;stroke-width:1.3;stroke-dasharray:1.2 .45" cx="1018" cy="764.2" r="65.6"/>
<circle style="fill:none;stroke:#000;stroke-width:1.3;stroke-dasharray:1.1 .6" cx="1018" cy="764.2" r="64.4"/>
<circle style="fill:none;stroke:#000;stroke-width:1.3;stroke-dasharray:1 .8" cx="1018" cy="764.2" r="63.2"/>
<circle style="fill:none;stroke:#000;stroke-width:1.3;stroke-dasharray:.9 1.05" cx="1018" cy="764.2" r="62"/>
<circle style="fill:none;stroke:#000;stroke-width:1.3;stroke-dasharray:.8 1.4" cx="1018" cy="764.2" r="60.8"/>
<circle style="fill:none;stroke:#000;stroke-width:1.3;stroke-dasharray:.7 1.9" cx="1018" cy="764.2" r="59.6"/>
<circle style="fill:none;stroke:#000;stroke-width:1.3;stroke-dasharray:.6 2.6" cx="1018" cy="764.2" r="58.4"/>
<circle style="fill:url(#oval2);stroke:#111;stroke-width:1" cx="1018" cy="765.2" r="33.8"/>
<ellipse cx="1018" cy="953" rx="73.3" ry="79.5" fill="#f3efd2" stroke="#1a1a1a" stroke-width="1"/>
<ellipse cx="1018" cy="953.2" rx="70.3" ry="75.6" fill="#a2ac34"/>
<ellipse cx="1018" cy="954.5" rx="45.9" ry="46" fill="none" stroke="#e4e494" stroke-width="1.5"/>
<ellipse cx="1018" cy="954.2" rx="51" ry="51.9" fill="none" stroke="#e4e494" stroke-width="1.5"/>
<ellipse cx="1018" cy="953.9" rx="56" ry="57.9" fill="none" stroke="#e4e494" stroke-width="1.5"/>
<ellipse cx="1018" cy="953.6" rx="61.1" ry="64" fill="none" stroke="#e4e494" stroke-width="1.5"/>
<ellipse cx="1018" cy="953.4" rx="66.1" ry="70.3" fill="none" stroke="#e4e494" stroke-width="1.5"/>
<polygon points="1061.2,946.2 1089.9,943.3 1087.4,930.3 1060.8,944.5" fill="#efe7bd" stroke="#d9b277" stroke-width=".9"/>
<circle cx="1082.9" cy="938.7" r="1" fill="#b9a98a"/>
<polygon points="1052.3,926.9 1077.3,907.9 1069.4,897.7 1051.1,925.5" fill="#efe7bd" stroke="#d9b277" stroke-width=".9"/>
<circle cx="1068.8" cy="908" r="1" fill="#b9a98a"/>
<polygon points="1033.9,913.5 1048.5,881.8 1036.9,877.3 1032.2,912.9" fill="#efe7bd" stroke="#d9b277" stroke-width=".9"/>
<circle cx="1040.7" cy="887.1" r="1" fill="#b9a98a"/>
<polygon points="1011.2,911 1011.5,874.9 999.4,877.2 1009.5,911.3" fill="#efe7bd" stroke="#d9b277" stroke-width=".9"/>
<circle cx="1006.5" cy="883.9" r="1" fill="#b9a98a"/>
<polygon points="989.2,921.2 974.2,890.5 965.1,899.4 987.9,922.4" fill="#efe7bd" stroke="#d9b277" stroke-width=".9"/>
<circle cx="973.6" cy="900.9" r="1" fill="#b9a98a"/>
<polygon points="976.2,940.8 950.7,923.8 947.1,936.5 975.7,942.5" fill="#efe7bd" stroke="#d9b277" stroke-width=".9"/>
<circle cx="954.6" cy="932.7" r="1" fill="#b9a98a"/>
<g transform="translate(1018 954.5)">
<circle r="45.3" fill="#8a8a84"/>
<path d="M38.4 -8.2L46 -9.8" stroke="#d2a765" stroke-width="3"/>
<path d="M30.1 -25.3L36 -30.2" stroke="#d2a765" stroke-width="3"/>
<path d="M13.4 -36.9L16.1 -44.2" stroke="#d2a765" stroke-width="3"/>
<path d="M-6.8 -38.7L-8.2 -46.3" stroke="#d2a765" stroke-width="3"/>
<path d="M-26.3 -29.2L-31.4 -34.9" stroke="#d2a765" stroke-width="3"/>
<path d="M-37.6 -11.5L-44.9 -13.7" stroke="#d2a765" stroke-width="3"/>
<circle r="39.3" fill="#fafae0"/>
<path d="M25.7 0L39.3 0M25.5 3.4L39 5.1M24.8 6.7L38 10.2M23.7 9.8L36.3 15M22.3 12.8L34 19.6M20.4 15.6L31.2 23.9M18.2 18.2L27.8 27.8M15.6 20.4L23.9 31.2M12.9 22.3L19.7 34M9.8 23.7L15 36.3M6.7 24.8L10.2 38M3.4 25.5L5.1 39M0 25.7L0 39.3M-3.4 25.5L-5.1 39M-6.7 24.8L-10.2 38M-9.8 23.7L-15 36.3M-12.8 22.3L-19.6 34M-15.6 20.4L-23.9 31.2M-18.2 18.2L-27.8 27.8M-20.4 15.6L-31.2 23.9M-22.3 12.8L-34 19.6M-23.7 9.8L-36.3 15M-24.8 6.7L-38 10.2M-25.5 3.4L-39 5.1M-25.7 0L-39.3 0M-25.5 -3.4L-39 -5.1M-24.8 -6.7L-38 -10.2M-23.7 -9.8L-36.3 -15M-22.3 -12.8L-34 -19.6M-20.4 -15.6L-31.2 -23.9M-18.2 -18.2L-27.8 -27.8M-15.6 -20.4L-23.9 -31.2M-12.9 -22.3L-19.7 -34M-9.8 -23.7L-15 -36.3M-6.7 -24.8L-10.2 -38M-3.4 -25.5L-5.1 -39M-0 -25.7L-0 -39.3M3.4 -25.5L5.1 -39M6.7 -24.8L10.2 -38M9.8 -23.7L15 -36.3M12.9 -22.3L19.7 -34M15.6 -20.4L23.9 -31.2M18.2 -18.2L27.8 -27.8M20.4 -15.6L31.2 -23.9M22.3 -12.9L34 -19.7M23.7 -9.8L36.3 -15M24.8 -6.7L38 -10.2M25.5 -3.4L39 -5.1" stroke="#e3dfb4" stroke-width=".6"/>
<circle r="25.7" fill="#c9c4ae"/>
<circle r="23.5" fill="#2e3026"/>
<circle r="20.9" fill="#fbfbe2"/>
</g>
<ellipse cx="1018.2" cy="146.6" rx="61" ry="61" fill="#f3efd2" stroke="#1a1a1a" stroke-width="1"/>
<ellipse cx="1019.8" cy="146" rx="58" ry="58" fill="#a2ac34"/>
<ellipse cx="1029.8" cy="142.4" rx="39.4" ry="39.4" fill="none" stroke="#e4e494" stroke-width="1.5"/>
<ellipse cx="1027.7" cy="143.1" rx="43.3" ry="43.3" fill="none" stroke="#e4e494" stroke-width="1.5"/>
<ellipse cx="1025.6" cy="143.9" rx="47.2" ry="47.2" fill="none" stroke="#e4e494" stroke-width="1.5"/>
<ellipse cx="1023.5" cy="144.7" rx="51.1" ry="51.1" fill="none" stroke="#e4e494" stroke-width="1.5"/>
<ellipse cx="1021.4" cy="145.4" rx="55" ry="55" fill="none" stroke="#e4e494" stroke-width="1.5"/>
<polygon points="1064.9,156.8 1075.5,166.2 1071.3,175.5 1064.2,158.1" fill="#efe7bd" stroke="#d9b277" stroke-width=".9"/>
<circle cx="1071.3" cy="167.2" r="1" fill="#b9a98a"/>
<polygon points="1051.3,173.2 1055.6,194 1047,199.5 1050.1,174.1" fill="#efe7bd" stroke="#d9b277" stroke-width=".9"/>
<circle cx="1051.4" cy="190.5" r="1" fill="#b9a98a"/>
<polygon points="1031,179.7 1023.7,206.4 1013.5,206.4 1029.6,179.7" fill="#efe7bd" stroke="#d9b277" stroke-width=".9"/>
<circle cx="1022" cy="199.2" r="1" fill="#b9a98a"/>
<polygon points="1011.6,174.7 992.1,200.5 983.4,195.2 1010.3,174" fill="#efe7bd" stroke="#d9b277" stroke-width=".9"/>
<circle cx="994.2" cy="191.5" r="1" fill="#b9a98a"/>
<polygon points="996.6,158.7 966.4,176.4 962.1,167.2 996,157.4" fill="#efe7bd" stroke="#d9b277" stroke-width=".9"/>
<circle cx="973" cy="168.1" r="1" fill="#b9a98a"/>
<polygon points="992.8,141.6 958.5,149.5 958.9,139.2 992.9,140.1" fill="#efe7bd" stroke="#d9b277" stroke-width=".9"/>
<circle cx="968" cy="143.3" r="1" fill="#b9a98a"/>
<g transform="translate(1030.3 142.2)">
<circle r="38.8" fill="#8a8a84"/>
<path d="M31.1 13.8L37 16.5" stroke="#d2a765" stroke-width="3"/>
<path d="M18.5 28.5L22.1 34" stroke="#d2a765" stroke-width="3"/>
<path d="M0 34L0 40.5" stroke="#d2a765" stroke-width="3"/>
<path d="M-17.5 29.1L-20.9 34.7" stroke="#d2a765" stroke-width="3"/>
<path d="M-30.8 14.4L-36.7 17.1" stroke="#d2a765" stroke-width="3"/>
<path d="M-34 -1.2L-40.5 -1.4" stroke="#d2a765" stroke-width="3"/>
<circle r="34" fill="#fafae0"/>
<path d="M21.5 0L34 0M21.3 2.8L33.7 4.4M20.8 5.6L32.8 8.8M19.9 8.2L31.4 13M18.6 10.7L29.4 17M17.1 13.1L27 20.7M15.2 15.2L24 24M13.1 17.1L20.7 27M10.8 18.6L17 29.4M8.2 19.9L13 31.4M5.6 20.8L8.8 32.8M2.8 21.3L4.4 33.7M0 21.5L0 34M-2.8 21.3L-4.4 33.7M-5.6 20.8L-8.8 32.8M-8.2 19.9L-13 31.4M-10.7 18.6L-17 29.4M-13.1 17.1L-20.7 27M-15.2 15.2L-24 24M-17.1 13.1L-27 20.7M-18.6 10.7L-29.4 17M-19.9 8.2L-31.4 13M-20.8 5.6L-32.8 8.8M-21.3 2.8L-33.7 4.4M-21.5 0L-34 0M-21.3 -2.8L-33.7 -4.4M-20.8 -5.6L-32.8 -8.8M-19.9 -8.2L-31.4 -13M-18.6 -10.7L-29.4 -17M-17.1 -13.1L-27 -20.7M-15.2 -15.2L-24 -24M-13.1 -17.1L-20.7 -27M-10.8 -18.6L-17 -29.4M-8.2 -19.9L-13 -31.4M-5.6 -20.8L-8.8 -32.8M-2.8 -21.3L-4.4 -33.7M-0 -21.5L-0 -34M2.8 -21.3L4.4 -33.7M5.6 -20.8L8.8 -32.8M8.2 -19.9L13 -31.4M10.8 -18.6L17 -29.4M13.1 -17.1L20.7 -27M15.2 -15.2L24 -24M17.1 -13.1L27 -20.7M18.6 -10.8L29.4 -17M19.9 -8.2L31.4 -13M20.8 -5.6L32.8 -8.8M21.3 -2.8L33.7 -4.4" stroke="#e3dfb4" stroke-width=".6"/>
<circle r="21.5" fill="#c9c4ae"/>
<circle r="19.7" fill="#2e3026"/>
<circle r="17.9" fill="#fbfbe2"/>
</g>
<rect style="fill:#c3dbe8;stroke:#000;stroke-width:1.6" x="964.9" y="178.3" width="28.4" height="26.2"/>
<rect style="fill:#c3dbe8;stroke:#000;stroke-width:1.6" x="1043.7" y="178.3" width="28.4" height="26.2"/>
<path class="ln" style="stroke:#0c1218;stroke-width:1.25" d="M968.1 178.3V204.5M971.2 178.3V204.5M974.4 178.3V204.5M977.5 178.3V204.5M980.7 178.3V204.5M983.8 178.3V204.5M987 178.3V204.5M990.1 178.3V204.5"/>
<path class="ln" style="stroke:#0c1218;stroke-width:1.25" d="M1068.9 178.3V204.5M1065.8 178.3V204.5M1062.6 178.3V204.5M1059.5 178.3V204.5M1056.3 178.3V204.5M1053.2 178.3V204.5M1050 178.3V204.5M1046.9 178.3V204.5"/>
<path class="ln" style="stroke:#0c1218;stroke-width:1.6" d="M964.9 187H993.3M964.9 195.8H993.3"/>
<path class="ln" style="stroke:#0c1218;stroke-width:1.6" d="M1072.1 187H1043.7M1072.1 195.8H1043.7"/>
<rect style="fill:#c3dbe8;stroke:#000;stroke-width:1.6" x="814.6" y="196.4" width="23.6" height="25.5"/>
<rect style="fill:#c3dbe8;stroke:#000;stroke-width:1.6" x="1198.8" y="196.4" width="23.6" height="25.5"/>
<path class="ln" style="stroke:#0c1218;stroke-width:1.25" d="M818 196.4V221.9M821.3 196.4V221.9M824.7 196.4V221.9M828.1 196.4V221.9M831.5 196.4V221.9M834.8 196.4V221.9"/>
<path class="ln" style="stroke:#0c1218;stroke-width:1.25" d="M1219 196.4V221.9M1215.7 196.4V221.9M1212.3 196.4V221.9M1208.9 196.4V221.9M1205.5 196.4V221.9M1202.2 196.4V221.9"/>
<path class="ln" style="stroke:#0c1218;stroke-width:1.6" d="M814.6 204.9H838.2M814.6 213.4H838.2"/>
<path class="ln" style="stroke:#0c1218;stroke-width:1.6" d="M1222.4 204.9H1198.8M1222.4 213.4H1198.8"/>
<path style="fill:#0a0a0a;stroke:none" d="M666.2 382h1.4v1.2h-1.4zM670.4 391h2.2v1.2h-2.2zM654.7 397.2h2.2v1.2h-2.2zM657.8 401h1.4v1.2h-1.4zM646.4 439.4h2.2v1.2h-2.2zM661.6 453.2h2.2v1.2h-2.2zM665.2 461.3h1.4v1.2h-1.4zM662 479.3h2.2v1.2h-2.2zM664.7 487.6h2.2v1.2h-2.2zM641.1 508.9h1.4v1.2h-1.4zM654.7 515.2h2.2v1.2h-2.2zM657.8 518.7h2.2v1.2h-2.2zM641.8 536.3h1.4v1.2h-1.4zM654.7 574.7h2.2v1.2h-2.2zM657.8 578.5h2.2v1.2h-2.2zM655.1 635.2h1.4v1.2h-1.4zM657.8 639h2.2v1.2h-2.2zM661.6 651.5h2.2v1.2h-2.2zM665.2 660.3h1.4v1.2h-1.4zM655.1 686h2.2v1.2h-2.2zM657.8 689.5h2.2v1.2h-2.2zM641.1 708.5h1.4v1.2h-1.4zM645.3 717.3h2.2v1.2h-2.2zM637 725.6h2.2v1.2h-2.2zM735.7 897.5h1.4v1.2h-1.4zM776.1 907.3h2.2v1.2h-2.2zM784.5 918.4h2.2v1.2h-2.2zM723.1 928.2h1.4v1.2h-1.4zM748.2 926.8h2.2v1.2h-2.2zM823.5 907.3h2.2v1.2h-2.2zM827.7 905.9h1.4v1.2h-1.4zM880.6 904.5h2.2v1.2h-2.2zM904.3 908.7h2.2v1.2h-2.2zM928 891.9h1.4v1.2h-1.4zM656.2 684.3h2.2v1.2h-2.2zM666 659.2h2.2v1.2h-2.2zM727.3 721.9h1.4v1.2h-1.4zM675.7 875.2h2.2v1.2h-2.2zM642.3 915.6h2.2v1.2h-2.2zM696.7 912.8h1.4v1.2h-1.4zM928.8 892.5h2.2v1.2h-2.2zM880 906.3h2.2v1.2h-2.2zM905 911.3h1.4v1.2h-1.4zM908.8 918.8h2.2v1.2h-2.2zM833.8 922.5h2.2v1.2h-2.2zM826.3 907.5h1.4v1.2h-1.4zM970 863.8h2.2v1.2h-2.2zM975 871.3h2.2v1.2h-2.2zM1060 870h1.4v1.2h-1.4zM1086.3 885h2.2v1.2h-2.2zM1120 897.5h2.2v1.2h-2.2zM1056.3 862.5h1.4v1.2h-1.4z"/>
<path style="fill:#0a0a0a;stroke:none" d="M1126 872h1.8v1.2h-1.8zM1148 905h1.8v1.2h-1.8zM1190 880h1.8v1.2h-1.8zM1236 892h1.8v1.2h-1.8zM1301 900h1.8v1.2h-1.8zM1330 872h1.8v1.2h-1.8zM1362 846h1.8v1.2h-1.8zM1365 700h1.8v1.2h-1.8zM1372 660h1.8v1.2h-1.8zM1378 540h1.8v1.2h-1.8zM1374 470h1.8v1.2h-1.8zM1369 420h1.8v1.2h-1.8zM1290 905h1.8v1.2h-1.8z"/>
</g>
<path style="fill:url(#glg);fill-opacity:.93;stroke:#41606c;stroke-width:.9" d="M641 755.1L694.5 778.4L748.1 802.9L786.6 815.7L820 823.9L860 833L893.2 838L893.2 841L813.4 840.2L771.4 832L724.8 815.7L680.6 797.1L643.3 777.3L628.2 769.1Z"/>
<path class="ln" style="stroke:#7d9aa6;stroke-width:.7" d="M641 755.1L643.3 777.3M628.2 769.1L660 769.5M682.6 773L682.6 798M724.8 792L724.8 815.7M786.6 815.7L786.6 823L760 822"/>
<path style="fill:url(#glg);fill-opacity:.93;stroke:#41606c;stroke-width:.9" d="M1396 755.1L1342.5 778.4L1288.9 802.9L1250.4 815.7L1217 823.9L1177 833L1143.8 838L1143.8 841L1223.6 840.2L1265.6 832L1312.2 815.7L1356.4 797.1L1393.7 777.3L1408.8 769.1Z"/>
<path class="ln" style="stroke:#7d9aa6;stroke-width:.7" d="M1396 755.1L1393.7 777.3M1408.8 769.1L1377 769.5M1354.4 773L1354.4 798M1312.2 792L1312.2 815.7M1250.4 815.7L1250.4 823L1277 822"/>
<polygon style="fill:url(#glg);fill-opacity:.93;stroke:#41606c;stroke-width:.9" points="1396,755.1 1417,765.8 1401,773 1393.7,777.3"/>
<path class="ln" style="stroke:#222d33;stroke-width:1.4" d="M641 755.1L694.5 778.4L748.1 802.9L786.6 815.7L820 823.9L860 833L893.2 838"/>
<path class="ln" style="stroke:#222d33;stroke-width:1.4" d="M1396 755.1L1342.5 778.4L1288.9 802.9L1250.4 815.7L1217 823.9L1177 833L1143.8 838"/>
<path class="ln" style="stroke:#111;stroke-width:1.6;stroke-dasharray:2.2 .9" d="M642.1 785.4L680.6 802L724.8 820.5L771.4 835.5L812.3 843.5"/>
<path class="ln" style="stroke:#111;stroke-width:1.6;stroke-dasharray:2.2 .9" d="M1394.9 785.4L1356.4 802L1312.2 820.5L1265.6 835.5L1224.7 843.5"/>
<polygon style="fill:#0a0a0a;stroke:#000" points="886,794.3 869.7,806 880.2,825.8 890,831.6"/>
<polygon style="fill:#c4dce7;stroke:#141414;stroke-width:1.2" points="926.8,759.3 961.2,804.8 946.6,839.7 915.1,863 890,831.6 886,794.3"/>
<polygon style="fill:#dbecf4;stroke:none" points="926.8,762 936,775 899.9,783.8 889,793"/>
<polygon style="fill:#d2e6ef;stroke:none" points="899.9,783.8 936,775 954.7,813.5"/>
<polygon style="fill:#b9d3df;stroke:none" points="890,831.6 911.6,819.9 930.3,835 915.1,860"/>
<rect style="fill:#cfe2ea;stroke:#9db3bf;stroke-width:2.4" x="887.6" y="791" width="28.1" height="41.8"/>
<rect style="fill:#9fb3be" x="895.9" y="794.3" width="4.6" height="33.2"/>
<path class="ln" style="stroke:#a9c0ca;stroke-width:.9" d="M938.4 773V843"/>
<path class="ln" style="stroke:#1c262c;stroke-width:.9" d="M886 794.3L899.9 783.8L930.3 799L954.7 813.5M887.1 809.4C897 812 905 816 911.6 819.9C920 825 925 830 930.3 835L946.6 838.6M911.6 854.9L958.2 808.3M926.8 759.3L938.4 775L961.2 804.8"/>
<polygon style="fill:#111" points="926.8,759.3 920.5,765 933.3,765.2"/>
<polygon style="fill:#111" points="911.6,855.5 915.1,864 921,856.5"/>
<polygon style="fill:#0a0a0a;stroke:#000" points="1151,794.3 1167.3,806 1156.8,825.8 1147,831.6"/>
<polygon style="fill:#c4dce7;stroke:#141414;stroke-width:1.2" points="1110.2,759.3 1075.8,804.8 1090.4,839.7 1121.9,863 1147,831.6 1151,794.3"/>
<polygon style="fill:#dbecf4;stroke:none" points="1110.2,762 1101,775 1137.1,783.8 1148,793"/>
<polygon style="fill:#d2e6ef;stroke:none" points="1137.1,783.8 1101,775 1082.3,813.5"/>
<polygon style="fill:#b9d3df;stroke:none" points="1147,831.6 1125.4,819.9 1106.7,835 1121.9,860"/>
<rect style="fill:#cfe2ea;stroke:#9db3bf;stroke-width:2.4" x="1121.3" y="791" width="28.1" height="41.8"/>
<rect style="fill:#9fb3be" x="1136.5" y="794.3" width="4.6" height="33.2"/>
<path class="ln" style="stroke:#a9c0ca;stroke-width:.9" d="M1098.6 773V843"/>
<path class="ln" style="stroke:#1c262c;stroke-width:.9" d="M1151 794.3L1137.1 783.8L1106.7 799L1082.3 813.5M1149.9 809.4C1140 812 1132 816 1125.4 819.9C1117 825 1112 830 1106.7 835L1090.4 838.6M1125.4 854.9L1078.8 808.3M1110.2 759.3L1098.6 775L1075.8 804.8"/>
<polygon style="fill:#111" points="1110.2,759.3 1116.5,765 1103.7,765.2"/>
<polygon style="fill:#111" points="1125.4,855.5 1121.9,864 1116,856.5"/>
<polygon style="fill:#0a0a0a" points="1568.3,911.5 1614,934.3 1587.3,986.7 1544.1,961"/>
<polygon style="fill:#e9f0f2;stroke:#0a0a0a;stroke-width:1" points="1575.1,915.9 1589.2,923.2 1606.7,946.5 1592.1,975.6 1582.4,981.9 1561.1,968.8 1550.4,951.3 1562,931.9"/>
<polygon style="fill:#b9d2dc;stroke:#0a0a0a;stroke-width:1" points="1575.5,919.2 1588.2,925.7 1603.9,946.7 1590.8,972.9 1582.1,978.6 1562.9,966.8 1553.3,951 1563.7,933.6"/>
<polygon style="fill:#bcd4de;stroke:#86a2ad;stroke-width:.8" points="1576,923.1 1587,928.8 1600.6,946.9 1589.2,969.6 1581.7,974.6 1565,964.3 1556.7,950.7 1565.7,935.6"/>
<path class="ln" style="stroke:#111;stroke-width:1" d="M1558.2 963.4L1598 960.5"/>
<rect style="fill:#0a0a0a;stroke:none" rx="1.6" x="553.5" y="316.5" width="5" height="10.5"/>
<rect style="fill:#555;stroke:none" x="554.7" y="322.3" width="2.6" height="2.1"/>
<rect style="fill:#0a0a0a;stroke:none" rx="1.6" x="583" y="387" width="6" height="17.5"/>
<rect style="fill:#555;stroke:none" x="584.2" y="396.6" width="3.6" height="3.5"/>
<rect style="fill:#0a0a0a;stroke:none" rx="1.6" x="540.5" y="450" width="5" height="11"/>
<rect style="fill:#555;stroke:none" x="541.7" y="456.1" width="2.6" height="2.2"/>
<rect style="fill:#0a0a0a;stroke:none" rx="1.6" x="610.5" y="538" width="5" height="13.5"/>
<rect style="fill:#555;stroke:none" x="611.7" y="545.4" width="2.6" height="2.7"/>
<rect style="fill:#0a0a0a;stroke:none" rx="1.6" x="558" y="553" width="5.5" height="18"/>
<rect style="fill:#555;stroke:none" x="559.2" y="562.9" width="3.1" height="3.6"/>
<rect style="fill:#0a0a0a;stroke:none" rx="1.6" x="587.5" y="634" width="4.5" height="12"/>
<rect style="fill:#555;stroke:none" x="588.7" y="640.6" width="2.1" height="2.4"/>
<rect style="fill:#0a0a0a;stroke:none" rx="1.6" x="548" y="699" width="6" height="18"/>
<rect style="fill:#555;stroke:none" x="549.2" y="708.9" width="3.6" height="3.6"/>
<rect style="fill:#0a0a0a;stroke:none" rx="1.6" x="587" y="804" width="5" height="12"/>
<rect style="fill:#555;stroke:none" x="588.2" y="810.6" width="2.6" height="2.4"/>
<rect style="fill:#0a0a0a;stroke:none" rx="1.6" x="576" y="887" width="6" height="19"/>
<rect style="fill:#555;stroke:none" x="577.2" y="897.5" width="3.6" height="3.8"/>
<rect style="fill:#0a0a0a;stroke:none" rx="1.6" x="763" y="976.5" width="18" height="6"/>
<rect style="fill:#4a4a4a;stroke:none" x="768.4" y="978" width="5.4" height="3"/>
<rect style="fill:#0a0a0a;stroke:none" rx="1.6" x="1048" y="955" width="18.5" height="6"/>
<rect style="fill:#4a4a4a;stroke:none" x="1053.5" y="956.5" width="5.5" height="3"/>
<rect style="fill:#0a0a0a;stroke:none" rx="1.6" x="1149" y="973" width="11" height="5.5"/>
<rect style="fill:#4a4a4a;stroke:none" x="1152.3" y="974.5" width="3.3" height="2.5"/>
<rect style="fill:#0a0a0a;stroke:none" rx="1.6" x="1265" y="953.5" width="18" height="5.5"/>
<rect style="fill:#4a4a4a;stroke:none" x="1270.4" y="955" width="5.4" height="2.5"/>
<path d="M348.5 120V996M1627.5 120V996" stroke="#000" stroke-width="1"/></svg>
</div>
<div id="status">
<svg class="abs" style="left:0;top:0" width="110" height="34" viewBox="0 0 110 34"><circle cx="15.5" cy="18.5" r="8.2" fill="#f4ede6" stroke="#111" stroke-width="1.7"/><path d="M11.5 13.5H19.5V22L15.5 25L11.5 22Z" fill="#b23a24" stroke="#5a1a0d" stroke-width=".8"/><circle cx="15.5" cy="17" r="2" fill="#f2d9c8"/><path d="M15.5 18.5V23" stroke="#f2d9c8" stroke-width="1.2"/><circle cx="50.2" cy="18.5" r="8.2" fill="#fff" stroke="#111" stroke-width="1.7"/><circle cx="50.2" cy="14.2" r="1.7" fill="#111"/><path d="M48 17.3H52.4V23.6H48Z" fill="#111"/><circle cx="85.5" cy="18.5" r="8.4" fill="#e9e9e9" stroke="#b3b3b3" stroke-width="1.5"/><circle cx="85.5" cy="15.6" r="3" fill="#b3b3b3"/><path d="M79.3 23.5C80.5 19.5 90.5 19.5 91.7 23.5C90 26.3 81 26.3 79.3 23.5Z" fill="#b3b3b3"/></svg>
<div class="abs" style="left:107px;top:8px;width:1px;height:18px;background:#a0a0a0"></div>
<div id="stext">Select objects. Shift to extend select. Drag mouse to select multiple.</div>
<div class="abs" style="left:1542px;top:8px;width:1px;height:18px;background:#a0a0a0"></div>
<div id="meas">Measurements</div>
<div id="measbox"></div>
</div>
<div id="skp"><div class="t"></div><div class="b"></div><span>SKP</span></div>
</body>
</html>
